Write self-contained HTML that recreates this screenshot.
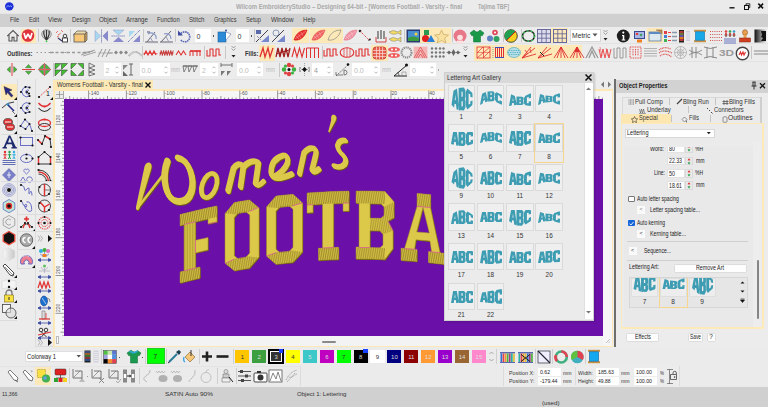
<!DOCTYPE html><html><head><meta charset="utf-8"><style>
*{margin:0;padding:0;box-sizing:border-box}
html,body{width:768px;height:407px;overflow:hidden;background:#ececec;font-family:"Liberation Sans",sans-serif;color:#222;position:relative}
.a{position:absolute}
.t{position:absolute;white-space:nowrap;line-height:1}
svg{position:absolute;overflow:visible}
</style></head><body><div class="a" style="left:0px;top:0px;width:768px;height:407px;background:#ececec"></div><div class="a" style="left:0px;top:0px;width:768px;height:13px;background:#ebebeb"></div><svg style="left:0px;top:0px;" width="20" height="13" viewBox="0 0 20 13"><ellipse cx="9.3" cy="6.3" rx="4.3" ry="4.1" fill="#1c2ed8"/><path d="M6.3 7.2 Q8 4.5 9.5 6.5 Q10.5 5 12 6.8" stroke="#a8c8ff" stroke-width="0.8" fill="none"/></svg><div class="t" style="left:235.50px;top:4.01px;font-size:6.6px;color:#a9a9a9;font-weight:bold;transform:scaleX(0.902);transform-origin:0 0;">Wilcom EmbroideryStudio – Designing 64-bit - [Womens Football - Varsity - final</div><div class="t" style="left:477.80px;top:4.01px;font-size:6.6px;color:#a9a9a9;font-weight:bold;transform:scaleX(0.832);transform-origin:0 0;">Tajima TBF]</div><svg style="left:725px;top:0px;" width="43" height="13" viewBox="0 0 43 13"><path d="M4.5 7.8h5" stroke="#111" stroke-width="1.4"/><rect x="19.5" y="5.5" width="4" height="4" fill="none" stroke="#111" stroke-width="1"/><path d="M21 5V3.8h3.8v3.8H23.5" fill="none" stroke="#111" stroke-width="0.9"/><path d="M33.3 3.6l4.8 4.8M38.1 3.6l-4.8 4.8" stroke="#111" stroke-width="1.5"/></svg><div class="a" style="left:0px;top:13px;width:768px;height:1px;background:#e6e6e6"></div><div class="a" style="left:0px;top:13.5px;width:768px;height:13px;background:#d0d0d0"></div><div class="t" style="left:9.90px;top:16.69px;font-size:7.1px;color:#3a3a3a;transform:scaleX(0.804);transform-origin:0 0;">File</div><div class="t" style="left:29.00px;top:16.69px;font-size:7.1px;color:#3a3a3a;transform:scaleX(0.817);transform-origin:0 0;">Edit</div><div class="t" style="left:48.00px;top:16.69px;font-size:7.1px;color:#3a3a3a;transform:scaleX(0.917);transform-origin:0 0;">View</div><div class="t" style="left:71.50px;top:16.69px;font-size:7.1px;color:#3a3a3a;transform:scaleX(0.837);transform-origin:0 0;">Design</div><div class="t" style="left:99.00px;top:16.69px;font-size:7.1px;color:#3a3a3a;transform:scaleX(0.877);transform-origin:0 0;">Object</div><div class="t" style="left:126.00px;top:16.69px;font-size:7.1px;color:#3a3a3a;transform:scaleX(0.871);transform-origin:0 0;">Arrange</div><div class="t" style="left:157.00px;top:16.69px;font-size:7.1px;color:#3a3a3a;transform:scaleX(0.834);transform-origin:0 0;">Function</div><div class="t" style="left:188.60px;top:16.69px;font-size:7.1px;color:#3a3a3a;transform:scaleX(0.867);transform-origin:0 0;">Stitch</div><div class="t" style="left:213.50px;top:16.69px;font-size:7.1px;color:#3a3a3a;transform:scaleX(0.792);transform-origin:0 0;">Graphics</div><div class="t" style="left:246.00px;top:16.69px;font-size:7.1px;color:#3a3a3a;transform:scaleX(0.808);transform-origin:0 0;">Setup</div><div class="t" style="left:270.50px;top:16.69px;font-size:7.1px;color:#3a3a3a;transform:scaleX(0.891);transform-origin:0 0;">Window</div><div class="t" style="left:302.50px;top:16.69px;font-size:7.1px;color:#3a3a3a;transform:scaleX(0.856);transform-origin:0 0;">Help</div><div class="a" style="left:0px;top:26.5px;width:768px;height:52.5px;background:#ececec"></div><div class="a" style="left:0px;top:43px;width:768px;height:1px;background:#e2e2e2"></div><div class="a" style="left:0px;top:60.5px;width:768px;height:1px;background:#e2e2e2"></div><div class="a" style="left:0px;top:78.5px;width:440px;height:1px;background:#e2e2e2"></div><div class="a" style="left:1px;top:29px;width:3px;height:14px;background-image:radial-gradient(#b8b8b8 0.6px,transparent 0.7px);background-size:2px 2px"></div><svg style="left:6px;top:29px;" width="14" height="14" viewBox="0 0 14 14"><path d="M1.2 7.2L7 1.6l5.8 5.6M3 5.8v6.2h3v-3.6h2v3.6h3V5.8" fill="none" stroke="#555" stroke-width="1.1"/></svg><div class="a" style="left:20.5px;top:28.5px;width:15.5px;height:14px;background:#fde9b8"></div><svg style="left:21px;top:29px;" width="14" height="13" viewBox="0 0 14 13"><circle cx="7" cy="6.5" r="6.3" fill="#e0323c"/><path d="M3 4l1.6 5.2 2.4-4 2.4 4L11 4" fill="none" stroke="#fff" stroke-width="1.7" stroke-linejoin="round"/></svg><div class="a" style="left:38px;top:29px;width:1px;height:13px;background:#c8c8c8"></div><svg style="left:41px;top:29px;" width="11" height="13" viewBox="0 0 11 13"><path d="M5.5 0.8C1.5 0.8 0.5 4 0.8 6 1.3 8 3.5 10 5.5 11 7.5 10 9.7 8 10.2 6 10.5 4 9.5 0.8 5.5 0.8z" fill="#ddd" stroke="#555" stroke-width="0.6"/><path d="M5.5 1v10M3 1.8Q2 6 5.5 11M8 1.8Q9 6 5.5 11" stroke="#333" stroke-width="1.2" fill="none"/><circle cx="5.5" cy="12.3" r="0.9" fill="#3c3"/></svg><svg style="left:55px;top:29px;" width="14" height="14" viewBox="0 0 14 14"><path d="M1 4l2-2M3 6l3-2M2 8l2-1M6 1l2 2" stroke="#e04030" stroke-width="1" stroke-dasharray="1 0.6"/><path d="M3 9l4 3" stroke="#336" stroke-width="1.2"/><circle cx="10" cy="7" r="1.8" fill="none" stroke="#444" stroke-width="1"/><rect x="7.5" y="9" width="5" height="4" fill="#fff" stroke="#444" stroke-width="1"/></svg><div class="a" style="left:70px;top:29px;width:1px;height:13px;background:#c8c8c8"></div><svg style="left:72px;top:28.5px;" width="16" height="14" viewBox="0 0 16 14"><path d="M2 5l3-3h9v2l-3 3H2z" fill="#f0d9a8" stroke="#555" stroke-width="0.7"/><rect x="2" y="5" width="11" height="8" fill="#f8c878" stroke="#555" stroke-width="0.8"/><path d="M13 5l2-2v8l-2 2z" fill="#d8a858" stroke="#555" stroke-width="0.7"/></svg><div class="a" style="left:89px;top:29px;width:3px;height:14px;background-image:radial-gradient(#b8b8b8 0.6px,transparent 0.7px);background-size:2px 2px"></div><svg style="left:94px;top:28.5px;" width="15" height="14" viewBox="0 0 15 14"><path d="M7.5 0.5v13" stroke="#5566aa" stroke-width="0.9" stroke-dasharray="1.2 0.8"/><path d="M1 1.5L6.5 7 1 12.5z" fill="#a8d8f0" stroke="#88b" stroke-width="0.4"/><path d="M14 1.5L8.5 7 14 12.5z" fill="#8888cc"/></svg><svg style="left:111px;top:28.5px;" width="15" height="14" viewBox="0 0 15 14"><path d="M0.5 7h14" stroke="#5566aa" stroke-width="0.9" stroke-dasharray="1.2 0.8"/><path d="M2 1h11L7.5 6z" fill="#a8d8f0" stroke="#88b" stroke-width="0.4"/><path d="M2 13h11L7.5 8z" fill="#8888cc"/></svg><svg style="left:127px;top:28.5px;" width="15" height="14" viewBox="0 0 15 14"><path d="M1 13L13 1" stroke="#5566aa" stroke-width="0.9" stroke-dasharray="1.2 0.8"/><path d="M2 2h6L2 8z" fill="#a8d8f0"/><path d="M13 6v7H6z" fill="#8888cc"/></svg><div class="a" style="left:142.5px;top:29px;width:1px;height:13px;background:#c8c8c8"></div><svg style="left:144px;top:28.5px;" width="15" height="14" viewBox="0 0 15 14"><path d="M1 13h13M3 13L11 3" stroke="#667" stroke-width="1"/><path d="M4 5a5 5 0 0 1 8 5" fill="none" stroke="#8899cc" stroke-width="1.2"/><path d="M6 8l3 5" stroke="#99b" stroke-width="1"/><path d="M3 3l3 0" stroke="#557" stroke-width="1"/></svg><svg style="left:159px;top:28.5px;" width="15" height="14" viewBox="0 0 15 14"><path d="M1 13h13M2 13L12 2" stroke="#667" stroke-width="1"/><path d="M5 5a5 5 0 0 1 7 5" fill="none" stroke="#8899cc" stroke-width="1.2"/><path d="M7 8l3 5" stroke="#99b" stroke-width="1"/></svg><div class="a" style="left:174.5px;top:29px;width:1px;height:13px;background:#c8c8c8"></div><svg style="left:177px;top:28.5px;" width="15" height="14" viewBox="0 0 15 14"><path d="M4 4.5a5 5 0 1 1 -0.5 6" fill="none" stroke="#5a6ab8" stroke-width="1.6" stroke-dasharray="1.6 0.6"/><path d="M1 1.5v5h5z" fill="#3a4aa0"/></svg><div class="a" style="left:194.5px;top:28.5px;width:16px;height:13.5px;background:#fff"></div><div class="t" style="left:196.50px;top:33.07px;font-size:7px;color:#333;">0</div><div class="a" style="left:212.5px;top:35px;width:1.5px;height:1.5px;background:#555"></div><svg style="left:217px;top:28.5px;" width="16" height="14" viewBox="0 0 16 14"><rect x="1" y="3" width="8" height="10" fill="#2a8ad8" stroke="#2060a0" stroke-width="0.6"/><path d="M9 3l5 2-5 6" fill="#fff" stroke="#6a7ab0" stroke-width="0.6"/><circle cx="9" cy="1.5" r="1" fill="#3050a0"/></svg><div class="a" style="left:235.5px;top:28.5px;width:13px;height:13.5px;background:#fff"></div><div class="t" style="left:237.50px;top:33.07px;font-size:7px;color:#333;">0</div><div class="a" style="left:250.5px;top:35px;width:1.5px;height:1.5px;background:#555"></div><div class="a" style="left:253.5px;top:29px;width:1px;height:13px;background:#c8c8c8"></div><svg style="left:255px;top:28.5px;" width="15" height="14" viewBox="0 0 15 14"><rect x="1" y="1" width="5" height="4" fill="#5a6aa8"/><path d="M1 13L13 1" stroke="#445" stroke-width="1"/><path d="M6 13h8L14 6z" fill="#7788cc"/><path d="M2 7l4 4" stroke="#99a" stroke-width="1"/></svg><svg style="left:271px;top:28.5px;" width="15" height="14" viewBox="0 0 15 14"><circle cx="5" cy="4" r="3" fill="none" stroke="#8899bb" stroke-width="1"/><path d="M1 13L13 1" stroke="#445" stroke-width="1"/><path d="M6 13h8L14 6z" fill="#7788cc"/></svg><div class="a" style="left:289px;top:29px;width:3px;height:14px;background-image:radial-gradient(#b8b8b8 0.6px,transparent 0.7px);background-size:2px 2px"></div><div class="a" style="left:292px;top:28px;width:17px;height:15px;background:#fde9b8"></div><svg style="left:293px;top:29px;" width="15" height="13" viewBox="0 0 15 13"><path d="M1 11C3 4 8 1 14 1 12 8 7 12 1 11z" fill="#e83030" stroke="#c00" stroke-width="0.5"/><path d="M2 10L13 2M3 7l3 3M5 5l3 4M8 3l2 4" stroke="#fff" stroke-width="0.5" opacity=".6"/></svg><div class="a" style="left:310px;top:28px;width:32.5px;height:15px;background:#fde9b8"></div><svg style="left:311px;top:29px;" width="15" height="13" viewBox="0 0 15 13"><path d="M1 11C3 4 8 1 14 1 12 8 7 12 1 11z" fill="#f06060" stroke="#e05050" stroke-width="0.5"/><path d="M2 10L13 2M3 7l3 3M5 5l3 4M8 3l2 4" stroke="#fff" stroke-width="0.5" opacity=".6"/></svg><svg style="left:327px;top:29px;" width="15" height="13" viewBox="0 0 15 13"><path d="M1 11C3 4 8 1 14 1 12 8 7 12 1 11z" fill="none" stroke="#888" stroke-width="0.7"/></svg><svg style="left:343px;top:29px;" width="14" height="13" viewBox="0 0 14 13"><path d="M1 11C3 4 8 1 14 1 12 8 7 12 1 11z" fill="#f090a0" stroke="#e07080" stroke-width="0.5"/><path d="M2 10L13 2M3 7l3 3M5 5l3 4M8 3l2 4" stroke="#fff" stroke-width="0.5" opacity=".6"/></svg><svg style="left:358px;top:29px;" width="14" height="13" viewBox="0 0 14 13"><circle cx="2" cy="2" r="1.3" fill="#222"/><path d="M2.5 2.5L11 11" stroke="#d03030" stroke-width="0.9" stroke-dasharray="1.3 0.9"/><path d="M10 12l3-1-1-2z" fill="#222"/></svg><svg style="left:374px;top:28.5px;" width="14" height="14" viewBox="0 0 14 14"><path d="M4 2v8M7 1v9M10 2v8" stroke="#555" stroke-width="1.2"/><path d="M2 8v5h10V8" fill="none" stroke="#d03030" stroke-width="0.9"/></svg><svg style="left:388px;top:29px;" width="15" height="14" viewBox="0 0 15 14"><g><path d="M1 3Q5 0 10 3L13 1v5l-3-2Q5 7 1 3z" fill="#f4dc60" stroke="#777" stroke-width="0.5"/></g><g transform="translate(0,7)"><path d="M1 3Q5 0 10 3L13 1v5l-3-2Q5 7 1 3z" fill="#f4dc60" stroke="#777" stroke-width="0.5"/></g></svg><div class="a" style="left:404px;top:29px;width:1px;height:13px;background:#c8c8c8"></div><svg style="left:406px;top:28.5px;" width="15" height="14" viewBox="0 0 15 14"><rect x="0.5" y="0.5" width="14" height="13" fill="#2a3a70"/><rect x="2" y="2" width="11" height="10" fill="#4a90d0"/><path d="M2 9q4-3 11 0v3H2z" fill="#3a9a40"/><circle cx="10" cy="5" r="1.5" fill="#f0d040"/></svg><div class="a" style="left:420px;top:28px;width:31px;height:15px;background:#fde9b8"></div><svg style="left:421px;top:28.5px;" width="14" height="14" viewBox="0 0 14 14"><rect x="3" y="1" width="5" height="5" fill="#2a9a50"/><circle cx="4.5" cy="9.5" r="3.5" fill="#e02020"/><path d="M6 13l4-7 4 7z" fill="#2a80d8"/></svg><svg style="left:434px;top:28.5px;" width="15" height="14" viewBox="0 0 15 14"><path d="M7.5 1l2 4.5 5 .5-3.8 3.2 1.2 4.8-4.4-2.5-4.4 2.5 1.2-4.8L0.5 6l5-.5z" fill="#f8e0a0" stroke="#c8a860" stroke-width="0.7"/></svg><div class="a" style="left:451.5px;top:29px;width:1px;height:13px;background:#c8c8c8"></div><svg style="left:453px;top:28.5px;" width="15" height="14" viewBox="0 0 15 14"><circle cx="7" cy="7" r="6.5" fill="#e87888"/><circle cx="7" cy="8.5" r="2.8" fill="#fde0e0"/><path d="M4 13h6" stroke="#fde0e0" stroke-width="3"/></svg><svg style="left:469px;top:28.5px;" width="16" height="14" viewBox="0 0 16 14"><path d="M5 1L1 4l2 3 1.5-1V13h7V6l1.5 1 2-3-4-3q-1.5 2-3 2t-3-2z" fill="#1a9a48" stroke="#0a6a30" stroke-width="0.5"/></svg><svg style="left:486px;top:28.5px;" width="15" height="14" viewBox="0 0 15 14"><circle cx="9" cy="3.5" r="2.8" fill="#e04858"/><circle cx="4" cy="9.5" r="3" fill="#6080c0"/><circle cx="10.5" cy="10" r="3" fill="#30a060"/><circle cx="9" cy="3.5" r="1" fill="#fff"/></svg><div class="a" style="left:502.5px;top:29px;width:1px;height:13px;background:#c8c8c8"></div><svg style="left:504px;top:28.5px;" width="15" height="14" viewBox="0 0 15 14"><circle cx="7" cy="7" r="6.3" fill="#f4d020" stroke="#222" stroke-width="0.8"/><path d="M2.5 11.5A6.3 6.3 0 0 1 11.5 2.5z" fill="#20a050"/><path d="M2 12L12 2" stroke="#d02020" stroke-width="1"/></svg><div class="a" style="left:520.5px;top:29px;width:1px;height:13px;background:#c8c8c8"></div><svg style="left:521px;top:28.5px;" width="15" height="14" viewBox="0 0 15 14"><ellipse cx="7.5" cy="7" rx="6" ry="5.3" fill="none" stroke="#222" stroke-width="1.6"/><ellipse cx="7.5" cy="7" rx="6" ry="5.3" fill="none" stroke="#40c060" stroke-width="1.4" stroke-dasharray="2 2"/></svg><svg style="left:536.5px;top:28.5px;" width="14" height="14" viewBox="0 0 14 14"><rect x="0.5" y="0.5" width="13" height="13" fill="#dde" stroke="#6a6a9a" stroke-width="1"/><path d="M4.8 0.5v13M9.2 0.5v13M0.5 4.8h13M0.5 9.2h13" stroke="#6a6a9a" stroke-width="0.9"/></svg><div class="a" style="left:551px;top:28px;width:17px;height:15px;background:#fde9b8"></div><svg style="left:552.5px;top:28.5px;" width="14" height="14" viewBox="0 0 14 14"><rect x="0.5" y="0.5" width="13" height="13" fill="#fde9b8" stroke="#6a6a9a" stroke-width="1"/><path d="M4.8 0.5v13M9.2 0.5v13M0.5 4.8h13M0.5 9.2h13" stroke="#6a6a9a" stroke-width="0.9"/></svg><div class="a" style="left:569.5px;top:28.5px;width:31px;height:13.5px;background:#fff;border:1px solid #d8d8d8"></div><div class="t" style="left:572.00px;top:32.54px;font-size:6.8px;color:#333;transform:scaleX(0.999);transform-origin:0 0;">Metric</div><svg style="left:592px;top:33px;" width="6" height="4" viewBox="0 0 6 4"><path d="M0.5 0.5h5l-2.5 3z" fill="#555"/></svg><svg style="left:601.5px;top:29px;" width="8" height="13" viewBox="0 0 8 13"><path d="M1.5 1l2 2 2-2M1.5 3.5l2 2 2-2" stroke="#888" stroke-width="0.8" fill="none"/><path d="M1.5 9h4l-2 2.5z" fill="#222"/></svg><div class="a" style="left:611px;top:29px;width:3px;height:14px;background-image:radial-gradient(#b8b8b8 0.6px,transparent 0.7px);background-size:2px 2px"></div><svg style="left:615.5px;top:28.5px;" width="15" height="15" viewBox="0 0 15 15"><circle cx="7.3" cy="7" r="6.5" fill="#1e1e1e"/><circle cx="7.3" cy="3.6" r="1.1" fill="#fff"/><path d="M6 6h2.3v4.5h1V11.5H5.7v-1h1V7H6z" fill="#fff"/></svg><svg style="left:632px;top:28.5px;" width="15" height="15" viewBox="0 0 15 15"><rect x="2" y="2" width="11" height="8" fill="#3a4a90"/><rect x="3" y="3" width="9" height="6" fill="#a8b8e8"/><circle cx="5" cy="5" r="1.3" fill="#e04040"/><circle cx="9" cy="6" r="1.3" fill="#40a060"/><rect x="5" y="10.5" width="5" height="3" fill="#f08020"/></svg><div class="a" style="left:647px;top:28px;width:16px;height:15px;background:#fde9b8"></div><svg style="left:648px;top:28.5px;" width="15" height="14" viewBox="0 0 15 14"><rect x="1" y="3" width="12" height="9" fill="#dde8f0" stroke="#5a7aa0" stroke-width="0.8"/><rect x="1" y="3" width="12" height="2" fill="#5a8ac0"/><path d="M8 1h6v4" fill="#c09060" stroke="#806040" stroke-width="0.6"/></svg><svg style="left:663px;top:28.5px;" width="15" height="14" viewBox="0 0 15 14"><rect x="1" y="2" width="3" height="3" fill="#e04040"/><rect x="1" y="6" width="3" height="3" fill="#4080d0"/><rect x="1" y="10" width="3" height="3" fill="#40b050"/><path d="M5 3.5h3M5 7.5h3M5 11.5h3" stroke="#e04040" stroke-width="1"/><path d="M9 3.5h5M9 7.5h5M9 11.5h5" stroke="#8899aa" stroke-width="1.3"/></svg><svg style="left:678px;top:28.5px;" width="14" height="14" viewBox="0 0 14 14"><rect x="1" y="1" width="5" height="12.5" fill="#222"/><path d="M1.5 3h4M1.5 5h4M1.5 7h4M1.5 9h4M1.5 11h4" stroke-width="1.3" stroke="#e04040"/><path d="M1.5 5h4" stroke="#40a040" stroke-width="1.3"/><path d="M1.5 7h4" stroke="#4060e0" stroke-width="1.3"/><path d="M1.5 9h4" stroke="#f0a020" stroke-width="1.3"/><rect x="8" y="2" width="4" height="10" fill="#ccd"/><path d="M8 4h4M8 6h4M8 8h4M8 10h4" stroke="#fff" stroke-width="0.6"/></svg><svg style="left:693px;top:28.5px;" width="14" height="14" viewBox="0 0 14 14"><rect x="1" y="0.8" width="12" height="2" fill="#c89040"/><rect x="1" y="11.2" width="12" height="2" fill="#c89040"/><rect x="2.5" y="2.8" width="9" height="8.4" fill="#18a8e8" stroke="#0a70b0" stroke-width="0.6"/></svg><svg style="left:709px;top:28.5px;" width="14" height="14" viewBox="0 0 14 14"><path d="M1 2.5h12M1 5.5h12M1 8.5h12M1 11.5h12" stroke="#d05050" stroke-width="1" stroke-dasharray="1 1.2"/></svg><svg style="left:723px;top:28.5px;" width="14" height="15" viewBox="0 0 14 15"><circle cx="3" cy="2.5" r="1.3" fill="#e04040"/><circle cx="7" cy="2.5" r="1.3" fill="#30a050"/><circle cx="11" cy="2.5" r="1.3" fill="#30a0d0"/><path d="M3 4v4M1.5 6h3M7 4v4M5.5 6h3M11 4v4M9.5 6h3" stroke-width="1.2" stroke="#555"/><path d="M3 4v3M7 4v3M11 4v3" stroke="#e04040" stroke-width="1.3"/><path d="M1 10h12M1 12h12M1 14h12" stroke="#5a6ab8" stroke-width="0.9"/></svg><svg style="left:738px;top:28.5px;" width="14" height="14" viewBox="0 0 14 14"><ellipse cx="7" cy="3.5" rx="2.5" ry="2.8" fill="#e8a050" stroke="#905020" stroke-width="0.6"/><path d="M5.5 6h3v3h-3z" fill="#e8a050"/><rect x="1.5" y="9" width="11" height="4" fill="#d04020" stroke="#802010" stroke-width="0.5"/></svg><svg style="left:754px;top:28.5px;" width="14" height="14" viewBox="0 0 14 14"><defs><linearGradient id="gbw"><stop offset="0" stop-color="#111"/><stop offset="1" stop-color="#fff"/></linearGradient></defs><rect x="0.5" y="0.5" width="13" height="13" fill="url(#gbw)"/><path d="M7 2h5v10H7l2-3-2-1 1-2z" fill="#111"/></svg><div class="a" style="left:1px;top:46px;width:3px;height:13px;background-image:radial-gradient(#b8b8b8 0.6px,transparent 0.7px);background-size:2px 2px"></div><div class="t" style="left:7.00px;top:50.54px;font-size:6.8px;color:#333;font-weight:bold;transform:scaleX(0.865);transform-origin:0 0;">Outlines:</div><svg style="left:36px;top:46px;" width="44" height="13" viewBox="0 0 44 13"><path d="M0.5 6.5h40" stroke="#999" stroke-width="1" stroke-dasharray="1.5 2.5"/></svg><svg style="left:36px;top:46px;" width="44" height="13" viewBox="0 0 44 13"><path d="M14 6.5h40" stroke="#999" stroke-width="1.3" stroke-dasharray="3 2.5"/></svg><svg style="left:80px;top:46px;" width="17" height="13" viewBox="0 0 17 13"><path d="M1 9L15 4M3 10L16 6M2 7L13 5" stroke="#999" stroke-width="0.9"/></svg><svg style="left:97px;top:46px;" width="17" height="13" viewBox="0 0 17 13"><path d="M1 11L5 3M5 11L9 3M9 11L13 3M11 7h5" stroke="#999" stroke-width="1"/><path d="M1 7h14" stroke="#999" stroke-width="0.6"/></svg><svg style="left:113px;top:46px;" width="16" height="13" viewBox="0 0 16 13"><path d="M1 6.5l2-2 2 2-2 2zM6 6.5l2-2 2 2-2 2zM11 6.5l2-2 2 2-2 2z" fill="#888"/></svg><svg style="left:128px;top:46px;" width="15" height="13" viewBox="0 0 15 13"><path d="M1 10Q7 2 14 10" stroke="#999" stroke-width="2" fill="none" stroke-dasharray="0.6 0.6"/></svg><div class="a" style="left:141.5px;top:46px;width:1px;height:13px;background:#c8c8c8"></div><svg style="left:143px;top:46px;" width="16" height="13" viewBox="0 0 16 13"><path d="M1 9l2-4 2 4 2-4 2 4 2-4 2 4" stroke="#e03030" stroke-width="1.2" fill="none"/><path d="M0.5 7.5h14" stroke="#e03030" stroke-width="0.6"/></svg><svg style="left:159px;top:46px;" width="16" height="13" viewBox="0 0 16 13"><path d="M1 9.5l1.2-5 1.2 5 1.2-5 1.2 5 1.2-5 1.2 5 1.2-5 1.2 5 1.2-5 1.2 5 1.2-5" stroke="#c02020" stroke-width="0.8" fill="none"/><path d="M0.5 7h14" stroke="#c02020" stroke-width="0.8"/></svg><svg style="left:175px;top:46px;" width="14" height="13" viewBox="0 0 14 13"><path d="M1 9l2.5-4 2.5 4 2.5-4 2.5 4" stroke="#e03030" stroke-width="1.1" fill="none"/></svg><svg style="left:189px;top:46px;" width="13" height="13" viewBox="0 0 13 13"><path d="M1 10V5h3v5M5 5h3v5M8 5h3v5" stroke="#e03030" stroke-width="1" fill="none"/><path d="M1 5h11" stroke="#e03030" stroke-width="1.4"/></svg><div class="a" style="left:203.5px;top:46px;width:1px;height:13px;background:#c8c8c8"></div><svg style="left:206px;top:46px;" width="16" height="13" viewBox="0 0 16 13"><path d="M1 4v6h3V3h3v7h3V3h3v6h2" stroke="#e03030" stroke-width="1.1" fill="none" stroke-linejoin="round"/></svg><div class="a" style="left:224.5px;top:46px;width:1px;height:13px;background:#c8c8c8"></div><svg style="left:230px;top:45px;" width="8" height="15" viewBox="0 0 8 15"><path d="M1.5 1l2 2 2-2M1.5 3.5l2 2 2-2" stroke="#888" stroke-width="0.8" fill="none"/><path d="M1.5 10h4l-2 2.5z" fill="#222"/></svg><div class="a" style="left:240px;top:46px;width:3px;height:13px;background-image:radial-gradient(#b8b8b8 0.6px,transparent 0.7px);background-size:2px 2px"></div><div class="t" style="left:244.50px;top:50.54px;font-size:6.8px;color:#333;font-weight:bold;transform:scaleX(0.851);transform-origin:0 0;">Fills:</div><div class="a" style="left:259px;top:44.5px;width:16px;height:16px;background:#fde9b8"></div><svg style="left:259px;top:46px;" width="16" height="13" viewBox="0 0 16 13"><path d="M1 11L4 2l2 9 3-9 2 9 3-9" stroke="#e03030" stroke-width="1.3" fill="none"/></svg><svg style="left:275px;top:46px;" width="16" height="13" viewBox="0 0 16 13"><path d="M1 11L3 2l2 9 2-9 2 9 2-9 2 9 2-9" stroke="#a02020" stroke-width="1.3" fill="none"/><path d="M1 8L14 4" stroke="#a02020" stroke-width="1"/></svg><svg style="left:291px;top:46px;" width="15" height="13" viewBox="0 0 15 13"><path d="M1 11L3.5 2l2.5 9 2.5-9 2.5 9 2.5-9" stroke="#e03030" stroke-width="1.1" fill="none"/></svg><svg style="left:305px;top:46px;" width="16" height="13" viewBox="0 0 16 13"><path d="M1.5 12V2h12v10M5.5 2v10M9.5 2v10" stroke="#e03030" stroke-width="1" fill="none"/></svg><div class="a" style="left:322px;top:46px;width:1px;height:13px;background:#c8c8c8"></div><svg style="left:323px;top:46px;" width="16" height="13" viewBox="0 0 16 13"><path d="M1 4v6h3V3h3v7h3V3h3v6h2" stroke="#e03030" stroke-width="1.1" fill="none"/></svg><svg style="left:339px;top:46px;" width="16" height="13" viewBox="0 0 16 13"><ellipse cx="8" cy="6.5" rx="6.8" ry="4.8" fill="none" stroke="#e03030" stroke-width="1.1"/><path d="M5 2.5v8M8 2v9M11 2.5v8" stroke="#e03030" stroke-width="0.7"/></svg><svg style="left:355px;top:46px;" width="16" height="13" viewBox="0 0 16 13"><path d="M1 4v6h3V3h3v7h3V3h3v6h2" stroke="#e03030" stroke-width="1.1" fill="none"/></svg><div class="a" style="left:371px;top:44.5px;width:17px;height:16px;background:#fde9b8"></div><svg style="left:372px;top:46px;" width="15" height="14" viewBox="0 0 15 14"><rect x="1" y="1" width="13" height="12" rx="3" fill="#e86050" stroke="#c03020" stroke-width="0.7"/><path d="M4.5 1v12M7.5 1v12M10.5 1v12M1 4.5h13M1 7.5h13M1 10.5h13" stroke="#fff" stroke-width="0.7" opacity=".8"/></svg><svg style="left:387px;top:46px;" width="14" height="13" viewBox="0 0 14 13"><ellipse cx="7" cy="3.5" rx="6" ry="2.6" fill="#f06060"/><ellipse cx="7" cy="9.5" rx="6" ry="2.6" fill="#f06060"/><circle cx="5" cy="3.5" r="1" fill="#fff"/><circle cx="9" cy="3.5" r="1" fill="#fff"/><circle cx="5" cy="9.5" r="1" fill="#fff"/><circle cx="9" cy="9.5" r="1" fill="#fff"/></svg><svg style="left:400px;top:46px;" width="13" height="13" viewBox="0 0 13 13"><circle cx="6.5" cy="6.5" r="5" fill="none" stroke="#888" stroke-width="2" stroke-dasharray="1.2 0.8"/></svg><svg style="left:413px;top:46px;" width="15" height="13" viewBox="0 0 15 13"><rect x="0.5" y="0.5" width="14" height="12" fill="#f5c0c0"/><path d="M1 12L7.5 1 14 12M3 12l4.5-8 4.5 8M5 12l2.5-4 2.5 4" stroke="#e06060" stroke-width="1" fill="none"/><path d="M2 1v11M4 1v11M6 1v11M9 1v11M11 1v11M13 1v11" stroke="#e88" stroke-width="0.4"/></svg><svg style="left:430px;top:46px;" width="15" height="13" viewBox="0 0 15 13"><g fill="#777"><circle cx="2" cy="2.5" r="1.2"/><circle cx="6" cy="2.5" r="1.2"/><circle cx="10" cy="2.5" r="1.2"/><circle cx="13.5" cy="2.5" r="1.2"/><circle cx="2" cy="6.5" r="1.2"/><circle cx="6" cy="6.5" r="1.2"/><circle cx="10" cy="6.5" r="1.2"/><circle cx="13.5" cy="6.5" r="1.2"/><circle cx="2" cy="10.5" r="1.2"/><circle cx="6" cy="10.5" r="1.2"/><circle cx="10" cy="10.5" r="1.2"/><circle cx="13.5" cy="10.5" r="1.2"/></g></svg><svg style="left:446px;top:46px;" width="15" height="13" viewBox="0 0 15 13"><g fill="#666"><path d="M1 6.5l2-2 2 2-2 2z"/><path d="M5.5 6.5l2-3.5 2 3.5-2 3.5z"/><path d="M10 6.5l2-2 2 2-2 2z"/></g><path d="M0.5 6.5h14" stroke="#666" stroke-width="0.6"/></svg><svg style="left:462px;top:45px;" width="8" height="15" viewBox="0 0 8 15"><path d="M1.5 1l2 2 2-2M1.5 3.5l2 2 2-2" stroke="#888" stroke-width="0.8" fill="none"/><path d="M1.5 10h4l-2 2.5z" fill="#222"/></svg><div class="a" style="left:472px;top:46px;width:3px;height:13px;background-image:radial-gradient(#b8b8b8 0.6px,transparent 0.7px);background-size:2px 2px"></div><div class="a" style="left:474px;top:44.5px;width:108px;height:16px;background:#fde9b8"></div><svg style="left:475.5px;top:46px;" width="15" height="13" viewBox="0 0 15 13"><rect x="1" y="1" width="13" height="11" fill="none" stroke="#e03030" stroke-width="0.8"/><path d="M1 12L14 1M1 7L7 1M7 12L14 5M7.5 1v11" stroke="#e03030" stroke-width="0.7"/><path d="M1 6.5h13" stroke="#e03030" stroke-width="0.5"/></svg><svg style="left:491px;top:46px;" width="16" height="13" viewBox="0 0 16 13"><path d="M4.5 1v11M6.5 1v11M8.5 1v11M10.5 1v11M12.5 1v11" stroke="#e03030" stroke-width="1"/><path d="M4 1.5h9M4 11.5h9" stroke="#3a50c0" stroke-width="1.2"/><path d="M2 1v11" stroke="#777" stroke-width="0.7" stroke-dasharray="1 1"/></svg><svg style="left:506px;top:46px;" width="16" height="13" viewBox="0 0 16 13"><ellipse cx="8" cy="6.5" rx="6.5" ry="5" fill="#b8e0e8" stroke="#3aa0b8" stroke-width="0.6"/><path d="M3 4.5h10M2 6.5h12M3 8.5h10" stroke="#3aa0b8" stroke-width="0.8" stroke-dasharray="1 0.8"/></svg><svg style="left:521px;top:46px;" width="16" height="13" viewBox="0 0 16 13"><path d="M1 12L14 2M1 12L10 1M1 12L15 8M1 12l6-5" stroke="#e03030" stroke-width="0.9"/><path d="M4 4l2 3M9 3l1 4" stroke="#e03030" stroke-width="0.8"/></svg><svg style="left:537px;top:46px;" width="16" height="13" viewBox="0 0 16 13"><path d="M1 12L14 2M1 12L10 1M1 12L15 8" stroke="#e03030" stroke-width="0.9"/><path d="M3 6l4 4" stroke="#222" stroke-width="1"/></svg><svg style="left:553px;top:46px;" width="16" height="13" viewBox="0 0 16 13"><path d="M1 12L8 1l7 11M8 1v11M4 12L8 1l4 11" stroke="#e03030" stroke-width="0.9" fill="none"/></svg><svg style="left:569px;top:46px;" width="16" height="13" viewBox="0 0 16 13"><path d="M1 12L8 1l7 11M8 1v11M4 12L8 1l4 11" stroke="#e03030" stroke-width="0.9" fill="none"/><path d="M5 6h6L8 1z" fill="#e03030"/></svg><svg style="left:585px;top:46px;" width="14" height="13" viewBox="0 0 14 13"><path d="M1 12L7 1l6 11M4 12L7 5l3 7" stroke="#999" stroke-width="1.3" fill="none"/></svg><svg style="left:598px;top:46px;" width="15" height="13" viewBox="0 0 15 13"><path d="M1 3l2 9 2-9 2 9 2-9 2 9 2-9" stroke="#e85050" stroke-width="1" fill="none"/><path d="M2 1l2 9M8 2l2 8" stroke="#e85050" stroke-width="0.6"/></svg><svg style="left:613px;top:46px;" width="15" height="13" viewBox="0 0 15 13"><path d="M1 2v10h3V2h3v10h3V2h3v10" stroke="#999" stroke-width="1" fill="none"/></svg><svg style="left:628px;top:46px;" width="15" height="13" viewBox="0 0 15 13"><rect x="2" y="1" width="11" height="11" fill="none" stroke="#e03030" stroke-width="0.9" stroke-dasharray="1 0.7"/><path d="M5 3v7M7.5 3v7M10 3v7" stroke="#e03030" stroke-width="0.9" stroke-dasharray="1 0.7"/></svg><svg style="left:643px;top:46px;" width="15" height="13" viewBox="0 0 15 13"><path d="M1 2.5h13M1 5h13M1 7.5h13M1 10h13" stroke="#aaa" stroke-width="0.9"/></svg><svg style="left:658px;top:46px;" width="15" height="13" viewBox="0 0 15 13"><path d="M1 4Q6 0 13 3M1 7Q6 3 14 7M2 10Q7 6 14 11" stroke="#e05050" stroke-width="1.2" stroke-dasharray="1 0.6" fill="none"/></svg><svg style="left:673px;top:46px;" width="15" height="13" viewBox="0 0 15 13"><circle cx="7.5" cy="6.5" r="6" fill="none" stroke="#aaa" stroke-width="0.8"/><circle cx="7.5" cy="6.5" r="3" fill="none" stroke="#aaa" stroke-width="0.8"/><path d="M7.5 0.5v12M1.5 6.5h12M3 2l9 9M12 2l-9 9" stroke="#aaa" stroke-width="0.6"/></svg><svg style="left:688px;top:46px;" width="15" height="13" viewBox="0 0 15 13"><path d="M4 1v11M8 1v11" stroke="#888" stroke-width="1"/><path d="M1 4q6 5 13 0M1 9q6-5 13 0" stroke="#888" stroke-width="0.9" fill="none"/></svg><svg style="left:703px;top:46px;" width="15" height="13" viewBox="0 0 15 13"><path d="M1 1q6 3 13 0M1 12q6-3 13 0M4 1v11M10 1v11" stroke="#888" stroke-width="1" fill="none"/></svg><div class="t" style="left:719.00px;top:48.88px;font-size:9px;color:#999;font-weight:bold;transform:scaleX(1.304);transform-origin:0 0;">3D</div><svg style="left:735px;top:45.5px;" width="15" height="15" viewBox="0 0 15 15"><circle cx="7.5" cy="7.5" r="6.2" fill="#fff" stroke="#444" stroke-width="1.4"/><path d="M4 9l1.5-3 1 3 1.5-3 1 3 1.5-3" stroke="#e03030" stroke-width="1.1" fill="none"/></svg><div class="a" style="left:751px;top:46px;width:1px;height:13px;background:#c8c8c8"></div><svg style="left:754px;top:46px;" width="14" height="13" viewBox="0 0 14 13"><path d="M0 5h14M0 8h14" stroke="#aaa" stroke-width="1.3"/></svg><div class="a" style="left:1px;top:63px;width:3px;height:14px;background-image:radial-gradient(#b8b8b8 0.6px,transparent 0.7px);background-size:2px 2px"></div><svg style="left:5px;top:62px;" width="14" height="15" viewBox="0 0 14 15"><path d="M7 1v13" stroke="#e04040" stroke-width="1"/><path d="M5.3 4.5L2 7.5 5.3 10.5z" fill="#44c030" stroke="#333" stroke-width="0.4"/><path d="M8.7 4.5L12 7.5 8.7 10.5z" fill="#44c030" stroke="#333" stroke-width="0.4"/></svg><svg style="left:21px;top:62px;" width="15" height="15" viewBox="0 0 15 15"><path d="M1 7.5h13" stroke="#e04040" stroke-width="1"/><path d="M4.5 5.8L7.5 2.5l3 3.3z" fill="#44c030" stroke="#333" stroke-width="0.4"/><path d="M4.5 9.2l3 3.3 3-3.3z" fill="#44c030" stroke="#333" stroke-width="0.4"/></svg><svg style="left:37px;top:62px;" width="15" height="15" viewBox="0 0 15 15"><g fill="#44c030" stroke="#333" stroke-width="0.4"><path d="M6.5 2v4.5H2z"/><path d="M8.5 2v4.5H13z"/><path d="M6.5 13V8.5H2z"/><path d="M8.5 13V8.5H13z"/></g><path d="M7.5 1v13M1 7.5h13" stroke="#e06060" stroke-width="1.1"/></svg><div class="a" style="left:52.5px;top:63px;width:1px;height:14px;background:#c8c8c8"></div><svg style="left:54px;top:62px;" width="15" height="15" viewBox="0 0 15 15"><g fill="#44c030" stroke="#333" stroke-width="0.5"><path d="M1 1.5h6L1 7.5z"/><path d="M7.5 1.5h6l-6 6z"/><path d="M1 8h6l-6 6z"/><path d="M7.5 8h6l-6 6z"/></g></svg><svg style="left:70px;top:62px;" width="15" height="15" viewBox="0 0 15 15"><g fill="#44c030" stroke="#333" stroke-width="0.5"><path d="M1 1.5h5.5L1 7z"/><path d="M8 1.5h5.5V7z"/><path d="M1 8v5.5h5.5z"/><path d="M13.5 8v5.5H8z"/></g></svg><svg style="left:87px;top:62px;" width="10" height="15" viewBox="0 0 10 15"><path d="M2 1v13M2 1l6 3-6 2 6 2-6 2 6 2-6 2" stroke="#666" stroke-width="0.9" fill="none"/></svg><div class="a" style="left:103.5px;top:62.5px;width:17px;height:13.5px;background:#fff"></div><div class="t" style="left:105.50px;top:67.07px;font-size:7px;color:#bbb;">2</div><svg style="left:113.5px;top:63.5px;" width="6" height="11.5" viewBox="0 0 6 11.5"><path d="M1.5 4.25l1.5-1.5 1.5 1.5M1.5 7.75l1.5 1.5 1.5-1.5" stroke="#999" stroke-width="0.7" fill="none"/></svg><svg style="left:122px;top:62px;" width="12" height="15" viewBox="0 0 12 15"><path d="M1 3h5L1 8z" fill="#888"/><path d="M1 14h5L1 9z" fill="#666"/><path d="M7 2h4M9 2v11M7 13h4" stroke="#666" stroke-width="1"/></svg><div class="a" style="left:139.5px;top:62.5px;width:30px;height:13.5px;background:#fff"></div><div class="t" style="left:141.50px;top:67.07px;font-size:7px;color:#bbb;">0.0</div><svg style="left:162.5px;top:63.5px;" width="6" height="11.5" viewBox="0 0 6 11.5"><path d="M1.5 4.25l1.5-1.5 1.5 1.5M1.5 7.75l1.5 1.5 1.5-1.5" stroke="#999" stroke-width="0.7" fill="none"/></svg><div class="t" style="left:171.00px;top:67.00px;font-size:6.5px;color:#bbb;transform:scaleX(0.831);transform-origin:0 0;">mm</div><svg style="left:182px;top:63px;" width="17" height="12" viewBox="0 0 17 12"><path d="M1 3h4L2 9zM6 3h4L7 9zM11 3h4l-3 6z" fill="none" stroke="#666" stroke-width="0.8"/><path d="M1 3h15" stroke="#666" stroke-width="1"/></svg><div class="a" style="left:200px;top:62.5px;width:18px;height:13.5px;background:#fff"></div><div class="t" style="left:202.00px;top:67.07px;font-size:7px;color:#bbb;">2</div><svg style="left:211px;top:63.5px;" width="6" height="11.5" viewBox="0 0 6 11.5"><path d="M1.5 4.25l1.5-1.5 1.5 1.5M1.5 7.75l1.5 1.5 1.5-1.5" stroke="#999" stroke-width="0.7" fill="none"/></svg><svg style="left:220px;top:62px;" width="13" height="15" viewBox="0 0 13 15"><path d="M1 3h11M1 1v4M12 1v4" stroke="#666" stroke-width="0.9"/><path d="M1 9h4L1 14zM7 9h4l-4 5z" fill="#777"/></svg><div class="a" style="left:237px;top:62.5px;width:26px;height:13.5px;background:#fff"></div><div class="t" style="left:239.00px;top:67.07px;font-size:7px;color:#bbb;">0.0</div><svg style="left:256px;top:63.5px;" width="6" height="11.5" viewBox="0 0 6 11.5"><path d="M1.5 4.25l1.5-1.5 1.5 1.5M1.5 7.75l1.5 1.5 1.5-1.5" stroke="#999" stroke-width="0.7" fill="none"/></svg><div class="t" style="left:266.00px;top:67.00px;font-size:6.5px;color:#bbb;transform:scaleX(0.831);transform-origin:0 0;">mm</div><div class="a" style="left:279px;top:63px;width:1px;height:14px;background:#c8c8c8"></div><svg style="left:281px;top:62px;" width="16" height="15" viewBox="0 0 16 15"><circle cx="8" cy="3" r="2.2" fill="#e04040"/><circle cx="13" cy="7.5" r="2.2" fill="#3cb040"/><circle cx="8" cy="12" r="2.2" fill="#e04040"/><circle cx="3" cy="7.5" r="2.2" fill="#3cb040"/><circle cx="4.5" cy="4" r="1.6" fill="#3cb040"/><circle cx="11.5" cy="11" r="1.6" fill="#3cb040"/><circle cx="11.5" cy="4" r="1.6" fill="#e04040"/><circle cx="4.5" cy="11" r="1.6" fill="#e04040"/><circle cx="8" cy="7.5" r="1.5" fill="#111"/></svg><svg style="left:298px;top:62px;" width="13" height="15" viewBox="0 0 13 15"><path d="M6.5 1v13M1 7.5h11" stroke="#888" stroke-width="0.7" stroke-dasharray="1 1"/><path d="M6.5 5l2.5 2.5-2.5 2.5-2.5-2.5z" fill="#111"/><path d="M1 6h2M1 9h2M10 6h2M10 9h2" stroke="#555" stroke-width="0.8"/></svg><div class="a" style="left:312px;top:62.5px;width:21px;height:13.5px;background:#fff"></div><div class="t" style="left:314.00px;top:67.07px;font-size:7px;color:#999;">4</div><svg style="left:326px;top:63.5px;" width="6" height="11.5" viewBox="0 0 6 11.5"><path d="M1.5 4.25l1.5-1.5 1.5 1.5M1.5 7.75l1.5 1.5 1.5-1.5" stroke="#999" stroke-width="0.7" fill="none"/></svg><svg style="left:335px;top:62px;" width="16" height="15" viewBox="0 0 16 15"><path d="M1 14L14 2" stroke="#444" stroke-width="0.8" stroke-dasharray="1.5 1"/><circle cx="13" cy="2.5" r="1.3" fill="#111"/><path d="M1 13h7M1 13v-3" stroke="#666" stroke-width="0.8"/><path d="M9 8v5q3 0 3-2.5t-3-2.5" fill="none" stroke="#666" stroke-width="0.8"/></svg><div class="a" style="left:352px;top:62.5px;width:28px;height:13.5px;background:#fff"></div><div class="t" style="left:354.00px;top:67.07px;font-size:7px;color:#bbb;">0.0</div><svg style="left:373px;top:63.5px;" width="6" height="11.5" viewBox="0 0 6 11.5"><path d="M1.5 4.25l1.5-1.5 1.5 1.5M1.5 7.75l1.5 1.5 1.5-1.5" stroke="#999" stroke-width="0.7" fill="none"/></svg><div class="t" style="left:382.00px;top:67.00px;font-size:6.5px;color:#bbb;transform:scaleX(0.831);transform-origin:0 0;">mm</div><svg style="left:393px;top:62px;" width="16" height="15" viewBox="0 0 16 15"><path d="M1 14h13M1 14L14 3" stroke="#222" stroke-width="1"/><circle cx="13.5" cy="3" r="1.5" fill="#111"/><path d="M6 14a6 6 0 0 0-1.5-4" stroke="#444" stroke-width="0.7" fill="none"/><path d="M9 10h4v4h-4z" fill="none" stroke="#888" stroke-width="0.6"/></svg><div class="a" style="left:410px;top:62.5px;width:26px;height:13.5px;background:#fff"></div><div class="t" style="left:412.00px;top:67.07px;font-size:7px;color:#bbb;">0</div><svg style="left:429px;top:63.5px;" width="6" height="11.5" viewBox="0 0 6 11.5"><path d="M1.5 4.25l1.5-1.5 1.5 1.5M1.5 7.75l1.5 1.5 1.5-1.5" stroke="#999" stroke-width="0.7" fill="none"/></svg><div class="a" style="left:437.5px;top:69px;width:1.5px;height:1.5px;background:#aaa"></div><div class="a" style="left:0px;top:79px;width:53px;height:308px;background:#ececec"></div><div class="a" style="left:53px;top:80px;width:100px;height:9.5px;background:#fce9b6"></div><div class="t" style="left:56.50px;top:82.01px;font-size:6.6px;color:#333;transform:scaleX(0.908);transform-origin:0 0;">Womens Football - Varsity - final</div><svg style="left:144px;top:81px;" width="8" height="8" viewBox="0 0 8 8"><path d="M1.5 1.5l5 5M6.5 1.5l-5 5" stroke="#111" stroke-width="1.4"/></svg><svg style="left:599px;top:80px;" width="14" height="9" viewBox="0 0 14 9"><path d="M5 1.5L2 4.5 5 7.5z" fill="#777"/><path d="M9 1.5l3 3-3 3z" fill="#777"/></svg><div class="a" style="left:53px;top:89px;width:560px;height:258px;background:#fde8b6"></div><div class="a" style="left:55px;top:90.5px;width:557px;height:255px;background:#efefef"></div><div class="a" style="left:55px;top:90.5px;width:548px;height:8.5px;background:#f6f6f6"></div><div class="a" style="left:55px;top:90.5px;width:9px;height:8.5px;background:#ececec;border-right:1px solid #aaa;border-bottom:1px solid #aaa"></div><svg style="left:56px;top:90px;" width="7" height="8" viewBox="0 0 7 8"><path d="M3.5 1v7M0 4.5h7" stroke="#777" stroke-width="0.6"/></svg><svg style="left:64px;top:90px;" width="539" height="9" viewBox="0 0 539 9"><path d="M1.92 7.5v2" stroke="#555" stroke-width="0.6"/><path d="M5.70 6v3.5" stroke="#555" stroke-width="0.6"/><path d="M9.48 7.5v2" stroke="#555" stroke-width="0.6"/><path d="M13.26 7.5v2" stroke="#555" stroke-width="0.6"/><path d="M17.04 7.5v2" stroke="#555" stroke-width="0.6"/><path d="M20.82 7.5v2" stroke="#555" stroke-width="0.6"/><path d="M24.60 0.5v9" stroke="#555" stroke-width="0.6"/><path d="M28.38 7.5v2" stroke="#555" stroke-width="0.6"/><path d="M32.16 7.5v2" stroke="#555" stroke-width="0.6"/><path d="M35.94 7.5v2" stroke="#555" stroke-width="0.6"/><path d="M39.72 7.5v2" stroke="#555" stroke-width="0.6"/><path d="M43.50 6v3.5" stroke="#555" stroke-width="0.6"/><path d="M47.28 7.5v2" stroke="#555" stroke-width="0.6"/><path d="M51.06 7.5v2" stroke="#555" stroke-width="0.6"/><path d="M54.84 7.5v2" stroke="#555" stroke-width="0.6"/><path d="M58.62 7.5v2" stroke="#555" stroke-width="0.6"/><path d="M62.40 0.5v9" stroke="#555" stroke-width="0.6"/><path d="M66.18 7.5v2" stroke="#555" stroke-width="0.6"/><path d="M69.96 7.5v2" stroke="#555" stroke-width="0.6"/><path d="M73.74 7.5v2" stroke="#555" stroke-width="0.6"/><path d="M77.52 7.5v2" stroke="#555" stroke-width="0.6"/><path d="M81.30 6v3.5" stroke="#555" stroke-width="0.6"/><path d="M85.08 7.5v2" stroke="#555" stroke-width="0.6"/><path d="M88.86 7.5v2" stroke="#555" stroke-width="0.6"/><path d="M92.64 7.5v2" stroke="#555" stroke-width="0.6"/><path d="M96.42 7.5v2" stroke="#555" stroke-width="0.6"/><path d="M100.20 0.5v9" stroke="#555" stroke-width="0.6"/><path d="M103.98 7.5v2" stroke="#555" stroke-width="0.6"/><path d="M107.76 7.5v2" stroke="#555" stroke-width="0.6"/><path d="M111.54 7.5v2" stroke="#555" stroke-width="0.6"/><path d="M115.32 7.5v2" stroke="#555" stroke-width="0.6"/><path d="M119.10 6v3.5" stroke="#555" stroke-width="0.6"/><path d="M122.88 7.5v2" stroke="#555" stroke-width="0.6"/><path d="M126.66 7.5v2" stroke="#555" stroke-width="0.6"/><path d="M130.44 7.5v2" stroke="#555" stroke-width="0.6"/><path d="M134.22 7.5v2" stroke="#555" stroke-width="0.6"/><path d="M138.00 0.5v9" stroke="#555" stroke-width="0.6"/><path d="M141.78 7.5v2" stroke="#555" stroke-width="0.6"/><path d="M145.56 7.5v2" stroke="#555" stroke-width="0.6"/><path d="M149.34 7.5v2" stroke="#555" stroke-width="0.6"/><path d="M153.12 7.5v2" stroke="#555" stroke-width="0.6"/><path d="M156.90 6v3.5" stroke="#555" stroke-width="0.6"/><path d="M160.68 7.5v2" stroke="#555" stroke-width="0.6"/><path d="M164.46 7.5v2" stroke="#555" stroke-width="0.6"/><path d="M168.24 7.5v2" stroke="#555" stroke-width="0.6"/><path d="M172.02 7.5v2" stroke="#555" stroke-width="0.6"/><path d="M175.80 0.5v9" stroke="#555" stroke-width="0.6"/><path d="M179.58 7.5v2" stroke="#555" stroke-width="0.6"/><path d="M183.36 7.5v2" stroke="#555" stroke-width="0.6"/><path d="M187.14 7.5v2" stroke="#555" stroke-width="0.6"/><path d="M190.92 7.5v2" stroke="#555" stroke-width="0.6"/><path d="M194.70 6v3.5" stroke="#555" stroke-width="0.6"/><path d="M198.48 7.5v2" stroke="#555" stroke-width="0.6"/><path d="M202.26 7.5v2" stroke="#555" stroke-width="0.6"/><path d="M206.04 7.5v2" stroke="#555" stroke-width="0.6"/><path d="M209.82 7.5v2" stroke="#555" stroke-width="0.6"/><path d="M213.60 0.5v9" stroke="#555" stroke-width="0.6"/><path d="M217.38 7.5v2" stroke="#555" stroke-width="0.6"/><path d="M221.16 7.5v2" stroke="#555" stroke-width="0.6"/><path d="M224.94 7.5v2" stroke="#555" stroke-width="0.6"/><path d="M228.72 7.5v2" stroke="#555" stroke-width="0.6"/><path d="M232.50 6v3.5" stroke="#555" stroke-width="0.6"/><path d="M236.28 7.5v2" stroke="#555" stroke-width="0.6"/><path d="M240.06 7.5v2" stroke="#555" stroke-width="0.6"/><path d="M243.84 7.5v2" stroke="#555" stroke-width="0.6"/><path d="M247.62 7.5v2" stroke="#555" stroke-width="0.6"/><path d="M251.40 0.5v9" stroke="#555" stroke-width="0.6"/><path d="M255.18 7.5v2" stroke="#555" stroke-width="0.6"/><path d="M258.96 7.5v2" stroke="#555" stroke-width="0.6"/><path d="M262.74 7.5v2" stroke="#555" stroke-width="0.6"/><path d="M266.52 7.5v2" stroke="#555" stroke-width="0.6"/><path d="M270.30 6v3.5" stroke="#555" stroke-width="0.6"/><path d="M274.08 7.5v2" stroke="#555" stroke-width="0.6"/><path d="M277.86 7.5v2" stroke="#555" stroke-width="0.6"/><path d="M281.64 7.5v2" stroke="#555" stroke-width="0.6"/><path d="M285.42 7.5v2" stroke="#555" stroke-width="0.6"/><path d="M289.20 0.5v9" stroke="#555" stroke-width="0.6"/><path d="M292.98 7.5v2" stroke="#555" stroke-width="0.6"/><path d="M296.76 7.5v2" stroke="#555" stroke-width="0.6"/><path d="M300.54 7.5v2" stroke="#555" stroke-width="0.6"/><path d="M304.32 7.5v2" stroke="#555" stroke-width="0.6"/><path d="M308.10 6v3.5" stroke="#555" stroke-width="0.6"/><path d="M311.88 7.5v2" stroke="#555" stroke-width="0.6"/><path d="M315.66 7.5v2" stroke="#555" stroke-width="0.6"/><path d="M319.44 7.5v2" stroke="#555" stroke-width="0.6"/><path d="M323.22 7.5v2" stroke="#555" stroke-width="0.6"/><path d="M327.00 0.5v9" stroke="#555" stroke-width="0.6"/><path d="M330.78 7.5v2" stroke="#555" stroke-width="0.6"/><path d="M334.56 7.5v2" stroke="#555" stroke-width="0.6"/><path d="M338.34 7.5v2" stroke="#555" stroke-width="0.6"/><path d="M342.12 7.5v2" stroke="#555" stroke-width="0.6"/><path d="M345.90 6v3.5" stroke="#555" stroke-width="0.6"/><path d="M349.68 7.5v2" stroke="#555" stroke-width="0.6"/><path d="M353.46 7.5v2" stroke="#555" stroke-width="0.6"/><path d="M357.24 7.5v2" stroke="#555" stroke-width="0.6"/><path d="M361.02 7.5v2" stroke="#555" stroke-width="0.6"/><path d="M364.80 0.5v9" stroke="#555" stroke-width="0.6"/><path d="M368.58 7.5v2" stroke="#555" stroke-width="0.6"/><path d="M372.36 7.5v2" stroke="#555" stroke-width="0.6"/><path d="M376.14 7.5v2" stroke="#555" stroke-width="0.6"/><path d="M379.92 7.5v2" stroke="#555" stroke-width="0.6"/><path d="M383.70 6v3.5" stroke="#555" stroke-width="0.6"/><path d="M387.48 7.5v2" stroke="#555" stroke-width="0.6"/><path d="M391.26 7.5v2" stroke="#555" stroke-width="0.6"/><path d="M395.04 7.5v2" stroke="#555" stroke-width="0.6"/><path d="M398.82 7.5v2" stroke="#555" stroke-width="0.6"/><path d="M402.60 0.5v9" stroke="#555" stroke-width="0.6"/><path d="M406.38 7.5v2" stroke="#555" stroke-width="0.6"/><path d="M410.16 7.5v2" stroke="#555" stroke-width="0.6"/><path d="M413.94 7.5v2" stroke="#555" stroke-width="0.6"/><path d="M417.72 7.5v2" stroke="#555" stroke-width="0.6"/><path d="M421.50 6v3.5" stroke="#555" stroke-width="0.6"/><path d="M425.28 7.5v2" stroke="#555" stroke-width="0.6"/><path d="M429.06 7.5v2" stroke="#555" stroke-width="0.6"/><path d="M432.84 7.5v2" stroke="#555" stroke-width="0.6"/><path d="M436.62 7.5v2" stroke="#555" stroke-width="0.6"/><path d="M440.40 0.5v9" stroke="#555" stroke-width="0.6"/><path d="M444.18 7.5v2" stroke="#555" stroke-width="0.6"/><path d="M447.96 7.5v2" stroke="#555" stroke-width="0.6"/><path d="M451.74 7.5v2" stroke="#555" stroke-width="0.6"/><path d="M455.52 7.5v2" stroke="#555" stroke-width="0.6"/><path d="M459.30 6v3.5" stroke="#555" stroke-width="0.6"/><path d="M463.08 7.5v2" stroke="#555" stroke-width="0.6"/><path d="M466.86 7.5v2" stroke="#555" stroke-width="0.6"/><path d="M470.64 7.5v2" stroke="#555" stroke-width="0.6"/><path d="M474.42 7.5v2" stroke="#555" stroke-width="0.6"/><path d="M478.20 0.5v9" stroke="#555" stroke-width="0.6"/><path d="M481.98 7.5v2" stroke="#555" stroke-width="0.6"/><path d="M485.76 7.5v2" stroke="#555" stroke-width="0.6"/><path d="M489.54 7.5v2" stroke="#555" stroke-width="0.6"/><path d="M493.32 7.5v2" stroke="#555" stroke-width="0.6"/><path d="M497.10 6v3.5" stroke="#555" stroke-width="0.6"/><path d="M500.88 7.5v2" stroke="#555" stroke-width="0.6"/><path d="M504.66 7.5v2" stroke="#555" stroke-width="0.6"/><path d="M508.44 7.5v2" stroke="#555" stroke-width="0.6"/><path d="M512.22 7.5v2" stroke="#555" stroke-width="0.6"/><path d="M516.00 0.5v9" stroke="#555" stroke-width="0.6"/><path d="M519.78 7.5v2" stroke="#555" stroke-width="0.6"/><path d="M523.56 7.5v2" stroke="#555" stroke-width="0.6"/><path d="M527.34 7.5v2" stroke="#555" stroke-width="0.6"/><path d="M531.12 7.5v2" stroke="#555" stroke-width="0.6"/><path d="M534.90 6v3.5" stroke="#555" stroke-width="0.6"/><path d="M538.68 7.5v2" stroke="#555" stroke-width="0.6"/></svg><div class="t" style="left:89.10px;top:91.27px;font-size:5px;color:#555;">-140</div><div class="t" style="left:126.90px;top:91.27px;font-size:5px;color:#555;">-120</div><div class="t" style="left:164.70px;top:91.27px;font-size:5px;color:#555;">-100</div><div class="t" style="left:202.50px;top:91.27px;font-size:5px;color:#555;">-80</div><div class="t" style="left:240.30px;top:91.27px;font-size:5px;color:#555;">-60</div><div class="t" style="left:278.10px;top:91.27px;font-size:5px;color:#555;">-40</div><div class="t" style="left:315.90px;top:91.27px;font-size:5px;color:#555;">-20</div><div class="t" style="left:353.70px;top:91.27px;font-size:5px;color:#555;">0</div><div class="t" style="left:391.50px;top:91.27px;font-size:5px;color:#555;">20</div><div class="t" style="left:429.30px;top:91.27px;font-size:5px;color:#555;">40</div><div class="t" style="left:467.10px;top:91.27px;font-size:5px;color:#555;">60</div><div class="t" style="left:504.90px;top:91.27px;font-size:5px;color:#555;">80</div><div class="t" style="left:542.70px;top:91.27px;font-size:5px;color:#555;">100</div><div class="t" style="left:580.50px;top:91.27px;font-size:5px;color:#555;">120</div><div class="a" style="left:55px;top:99px;width:9px;height:237px;background:#f6f6f6"></div><svg style="left:55px;top:99px;" width="9" height="237" viewBox="0 0 9 237"><path d="M7 2.62h2" stroke="#555" stroke-width="0.6"/><path d="M5.5 6.40h3.5" stroke="#555" stroke-width="0.6"/><path d="M7 10.18h2" stroke="#555" stroke-width="0.6"/><path d="M7 13.96h2" stroke="#555" stroke-width="0.6"/><path d="M7 17.74h2" stroke="#555" stroke-width="0.6"/><path d="M7 21.52h2" stroke="#555" stroke-width="0.6"/><path d="M0.5 25.30h8.5" stroke="#555" stroke-width="0.6"/><path d="M7 29.08h2" stroke="#555" stroke-width="0.6"/><path d="M7 32.86h2" stroke="#555" stroke-width="0.6"/><path d="M7 36.64h2" stroke="#555" stroke-width="0.6"/><path d="M7 40.42h2" stroke="#555" stroke-width="0.6"/><path d="M5.5 44.20h3.5" stroke="#555" stroke-width="0.6"/><path d="M7 47.98h2" stroke="#555" stroke-width="0.6"/><path d="M7 51.76h2" stroke="#555" stroke-width="0.6"/><path d="M7 55.54h2" stroke="#555" stroke-width="0.6"/><path d="M7 59.32h2" stroke="#555" stroke-width="0.6"/><path d="M0.5 63.10h8.5" stroke="#555" stroke-width="0.6"/><path d="M7 66.88h2" stroke="#555" stroke-width="0.6"/><path d="M7 70.66h2" stroke="#555" stroke-width="0.6"/><path d="M7 74.44h2" stroke="#555" stroke-width="0.6"/><path d="M7 78.22h2" stroke="#555" stroke-width="0.6"/><path d="M5.5 82.00h3.5" stroke="#555" stroke-width="0.6"/><path d="M7 85.78h2" stroke="#555" stroke-width="0.6"/><path d="M7 89.56h2" stroke="#555" stroke-width="0.6"/><path d="M7 93.34h2" stroke="#555" stroke-width="0.6"/><path d="M7 97.12h2" stroke="#555" stroke-width="0.6"/><path d="M0.5 100.90h8.5" stroke="#555" stroke-width="0.6"/><path d="M7 104.68h2" stroke="#555" stroke-width="0.6"/><path d="M7 108.46h2" stroke="#555" stroke-width="0.6"/><path d="M7 112.24h2" stroke="#555" stroke-width="0.6"/><path d="M7 116.02h2" stroke="#555" stroke-width="0.6"/><path d="M5.5 119.80h3.5" stroke="#555" stroke-width="0.6"/><path d="M7 123.58h2" stroke="#555" stroke-width="0.6"/><path d="M7 127.36h2" stroke="#555" stroke-width="0.6"/><path d="M7 131.14h2" stroke="#555" stroke-width="0.6"/><path d="M7 134.92h2" stroke="#555" stroke-width="0.6"/><path d="M0.5 138.70h8.5" stroke="#555" stroke-width="0.6"/><path d="M7 142.48h2" stroke="#555" stroke-width="0.6"/><path d="M7 146.26h2" stroke="#555" stroke-width="0.6"/><path d="M7 150.04h2" stroke="#555" stroke-width="0.6"/><path d="M7 153.82h2" stroke="#555" stroke-width="0.6"/><path d="M5.5 157.60h3.5" stroke="#555" stroke-width="0.6"/><path d="M7 161.38h2" stroke="#555" stroke-width="0.6"/><path d="M7 165.16h2" stroke="#555" stroke-width="0.6"/><path d="M7 168.94h2" stroke="#555" stroke-width="0.6"/><path d="M7 172.72h2" stroke="#555" stroke-width="0.6"/><path d="M0.5 176.50h8.5" stroke="#555" stroke-width="0.6"/><path d="M7 180.28h2" stroke="#555" stroke-width="0.6"/><path d="M7 184.06h2" stroke="#555" stroke-width="0.6"/><path d="M7 187.84h2" stroke="#555" stroke-width="0.6"/><path d="M7 191.62h2" stroke="#555" stroke-width="0.6"/><path d="M5.5 195.40h3.5" stroke="#555" stroke-width="0.6"/><path d="M7 199.18h2" stroke="#555" stroke-width="0.6"/><path d="M7 202.96h2" stroke="#555" stroke-width="0.6"/><path d="M7 206.74h2" stroke="#555" stroke-width="0.6"/><path d="M7 210.52h2" stroke="#555" stroke-width="0.6"/><path d="M0.5 214.30h8.5" stroke="#555" stroke-width="0.6"/><path d="M7 218.08h2" stroke="#555" stroke-width="0.6"/><path d="M7 221.86h2" stroke="#555" stroke-width="0.6"/><path d="M7 225.64h2" stroke="#555" stroke-width="0.6"/><path d="M7 229.42h2" stroke="#555" stroke-width="0.6"/><path d="M5.5 233.20h3.5" stroke="#555" stroke-width="0.6"/><path d="M7 236.98h2" stroke="#555" stroke-width="0.6"/></svg><div class="t" style="left:56px;top:122.8px;font-size:5px;color:#555;transform:rotate(-90deg);transform-origin:0 0">120</div><div class="t" style="left:56px;top:160.6px;font-size:5px;color:#555;transform:rotate(-90deg);transform-origin:0 0">140</div><div class="t" style="left:56px;top:198.4px;font-size:5px;color:#555;transform:rotate(-90deg);transform-origin:0 0">160</div><div class="t" style="left:56px;top:236.2px;font-size:5px;color:#555;transform:rotate(-90deg);transform-origin:0 0">180</div><div class="t" style="left:56px;top:274.0px;font-size:5px;color:#555;transform:rotate(-90deg);transform-origin:0 0">200</div><div class="t" style="left:56px;top:311.8px;font-size:5px;color:#555;transform:rotate(-90deg);transform-origin:0 0">220</div><div class="a" style="left:64px;top:99px;width:539px;height:237px;background:#6a10a8"></div><div class="a" style="left:603px;top:90.5px;width:9px;height:255px;background:#f6f6f6"></div><div class="a" style="left:55px;top:336px;width:548px;height:9.5px;background:#f3f3f3"></div><div class="a" style="left:55.5px;top:336px;width:3px;height:8px;background:#fff;border:1px solid #bbb"></div><svg style="left:603px;top:336px;" width="9" height="9" viewBox="0 0 9 9"><path d="M7 3L3 7M7 5.5L5.5 7" stroke="#aaa" stroke-width="0.7"/></svg><div class="a" style="left:613.5px;top:79px;width:2.2px;height:268px;background:#6e6e6e"></div><div class="a" style="left:17px;top:79px;width:1px;height:190px;background:#dcdcdc"></div><div class="a" style="left:35px;top:79px;width:1px;height:268px;background:#dcdcdc"></div><div class="a" style="left:0px;top:320px;width:17px;height:1px;background:#dcdcdc"></div><div class="a" style="left:18px;top:268px;width:17px;height:1px;background:#dcdcdc"></div><div class="a" style="left:36px;top:346px;width:17px;height:1px;background:#dcdcdc"></div><div class="a" style="left:2px;top:79px;width:13px;height:3px;background-image:radial-gradient(#c4c4c4 0.6px,transparent 0.7px);background-size:2px 2px"></div><div class="a" style="left:20px;top:79px;width:13px;height:3px;background-image:radial-gradient(#c4c4c4 0.6px,transparent 0.7px);background-size:2px 2px"></div><div class="a" style="left:38px;top:79px;width:13px;height:3px;background-image:radial-gradient(#c4c4c4 0.6px,transparent 0.7px);background-size:2px 2px"></div><div class="a" style="left:1px;top:84px;width:16px;height:15.5px;background:#fde9b8"></div><svg style="left:1px;top:84px;" width="16" height="16" viewBox="0 0 16 16"><path d="M3 2.5l8 3.5-3 1.2 4 4.5-1.6 1.4-4-4.5L5 11z" fill="#2a2a8a" stroke="#111" stroke-width="0.4"/></svg><svg style="left:14px;top:97px;" width="3" height="3" viewBox="0 0 3 3"><path d="M3 0v3H0z" fill="#111"/></svg><svg style="left:1px;top:100px;" width="16" height="17" viewBox="0 0 16 17"><path d="M1 8Q6 2 13 2" stroke="#222" stroke-width="0.9" fill="none"/><circle cx="7" cy="4.5" r="1.3" fill="#30a0d0"/><path d="M7 5l6 6" stroke="#2a2a8a" stroke-width="1.6"/><path d="M11 11l3 3" stroke="#111" stroke-width="0.8" stroke-dasharray="1 0.6"/></svg><svg style="left:14px;top:114px;" width="3" height="3" viewBox="0 0 3 3"><path d="M3 0v3H0z" fill="#111"/></svg><svg style="left:1px;top:117px;" width="16" height="17" viewBox="0 0 16 17"><ellipse cx="7" cy="5" rx="4.5" ry="3.5" fill="#e03030" stroke="#555" stroke-width="0.8"/><ellipse cx="9" cy="10" rx="4.5" ry="3.5" fill="#e03030" stroke="#555" stroke-width="0.8"/><path d="M4 5h6M6 10h6" stroke="#fff" stroke-width="1.2"/></svg><svg style="left:14px;top:131px;" width="3" height="3" viewBox="0 0 3 3"><path d="M3 0v3H0z" fill="#111"/></svg><div class="a" style="left:1px;top:134px;width:16px;height:1px;background:#dcdcdc"></div><svg style="left:1px;top:134px;" width="16" height="16" viewBox="0 0 16 16"><path d="M1.5 14.5h4.5v-1.2l-1.3-.3 1-2.8h5l1 2.8-1.3.3v1.2h5.5v-1.2l-1-.3L9.3 1.5H7.7L2.7 13l-1.2.3zM7 8.5l1.8-5 1.8 5z" fill="#1e2a6e"/></svg><svg style="left:1px;top:150px;" width="16" height="17" viewBox="0 0 16 17"><circle cx="4" cy="2" r="1.2" fill="#e03030"/><circle cx="8.5" cy="2" r="1.2" fill="#20a050"/><circle cx="13" cy="2" r="1.2" fill="#30b0e0"/><path d="M4 3.5v3.5M2.3 4.8h3.4M2.8 9l1.2-2 1.2 2" stroke="#e03030" stroke-width="1" fill="none"/><path d="M8.5 3.5v3.5M6.8 4.8h3.4M7.3 9l1.2-2 1.2 2" stroke="#20a050" stroke-width="1" fill="none"/><path d="M13 3.5v3.5M11.3 4.8h3.4M11.8 9l1.2-2 1.2 2" stroke="#30b0e0" stroke-width="1" fill="none"/><path d="M1.5 10.5h13M1.5 12.5h13M1.5 14.5h13" stroke="#5060b0" stroke-width="0.9"/></svg><svg style="left:1px;top:167px;" width="16" height="16" viewBox="0 0 16 16"><path d="M8 1.5l6.5 6.5L8 14.5 1.5 8z" fill="#7a80c8" stroke="#5a60a8" stroke-width="0.6"/><path d="M8 5v6M6 8h4" stroke="#fff" stroke-width="0.8"/></svg><div class="a" style="left:1px;top:181px;width:16px;height:1px;background:#dcdcdc"></div><svg style="left:1px;top:182px;" width="16" height="16" viewBox="0 0 16 16"><circle cx="8" cy="8" r="6.3" fill="none" stroke="#6a70c0" stroke-width="0.6"/><circle cx="8" cy="8" r="4.8" fill="none" stroke="#6a70c0" stroke-width="0.6"/><circle cx="8" cy="8" r="3.3" fill="none" stroke="#6a70c0" stroke-width="0.6"/><circle cx="8" cy="8" r="2" fill="#111"/></svg><svg style="left:1px;top:198px;" width="16" height="16" viewBox="0 0 16 16"><path d="M8 1.5l5.8 3.3v6.6L8 14.7 2.2 11.4V4.8z" fill="#bfe6d8" stroke="#5a70c0" stroke-width="0.8"/><circle cx="8" cy="8" r="3.2" fill="#e03030"/><circle cx="8" cy="8" r="1.8" fill="#111"/></svg><svg style="left:1px;top:214px;" width="16" height="16" viewBox="0 0 16 16"><path d="M8 1.5l5.8 3.3v6.6L8 14.7 2.2 11.4V4.8z" fill="none" stroke="#888" stroke-width="0.7"/><path d="M10 6a3 3 0 1 0 0 4" fill="none" stroke="#888" stroke-width="0.7"/></svg><svg style="left:1px;top:230px;" width="16" height="16" viewBox="0 0 16 16"><path d="M8 1.5l5.8 3.3v6.6L8 14.7 2.2 11.4V4.8z" fill="#111" stroke="#e85040" stroke-width="1.3"/></svg><svg style="left:1px;top:246px;" width="16" height="16" viewBox="0 0 16 16"><defs><linearGradient id="hg" x1="0" x2="1"><stop offset="0" stop-color="#f8f8f8"/><stop offset="1" stop-color="#c8c8c8"/></linearGradient></defs><path d="M8 1.5l5.8 3.3v6.6L8 14.7 2.2 11.4V4.8z" fill="url(#hg)" stroke="#ddd" stroke-width="0.6"/></svg><svg style="left:1px;top:262px;" width="16" height="16" viewBox="0 0 16 16"><path d="M2 4l2-2 9 9-1 3-3-1z" fill="#fff" stroke="#333" stroke-width="0.9"/><path d="M4 5l8 8" stroke="#333" stroke-width="0.5"/></svg><svg style="left:14px;top:275px;" width="3" height="3" viewBox="0 0 3 3"><path d="M3 0v3H0z" fill="#111"/></svg><svg style="left:1px;top:278px;" width="16" height="12" viewBox="0 0 16 12"><path d="M1 3q7-3 14 0v8q-7-3-14 0z" fill="#f4f4f4" stroke="#ccc" stroke-width="0.5"/><circle cx="8" cy="3" r="1.2" fill="#111"/><circle cx="8" cy="9" r="1.2" fill="#111"/></svg><svg style="left:14px;top:287px;" width="3" height="3" viewBox="0 0 3 3"><path d="M3 0v3H0z" fill="#111"/></svg><svg style="left:1px;top:289px;" width="16" height="14" viewBox="0 0 16 14"><path d="M5 6V4a3 3 0 0 1 6 0v2" fill="none" stroke="#777" stroke-width="1.3"/><rect x="3.5" y="6" width="9" height="7" fill="#f8e040" stroke="#807020" stroke-width="0.6"/><rect x="7.5" y="8" width="1" height="3" fill="#333"/></svg><svg style="left:14px;top:300px;" width="3" height="3" viewBox="0 0 3 3"><path d="M3 0v3H0z" fill="#111"/></svg><svg style="left:1px;top:303px;" width="16" height="17" viewBox="0 0 16 17"><rect x="1.5" y="1.5" width="8" height="8" fill="#f4f4f4" stroke="#444" stroke-width="0.8"/><circle cx="10" cy="10" r="5" fill="#ddd" fill-opacity=".6" stroke="#444" stroke-width="0.8"/></svg><svg style="left:14px;top:316px;" width="3" height="3" viewBox="0 0 3 3"><path d="M3 0v3H0z" fill="#111"/></svg><svg style="left:18px;top:84px;" width="17" height="16" viewBox="0 0 17 16"><path d="M11.5 3.5A5 5 0 1 0 11.5 12" fill="none" stroke="#5a60c0" stroke-width="0.9"/><path d="M11 6.5a2 2 0 1 0 0 3" fill="none" stroke="#5a60c0" stroke-width="0.9"/><circle cx="11.5" cy="3.5" r="1.1" fill="#111"/><circle cx="3" cy="8" r="1.1" fill="#111"/><circle cx="11.5" cy="12" r="1.1" fill="#111"/><circle cx="9" cy="8" r="1.1" fill="#111"/><circle cx="11" cy="9.5" r="1.1" fill="#111"/><circle cx="7.5" cy="3" r="1.1" fill="#111"/></svg><svg style="left:18px;top:100px;" width="17" height="17" viewBox="0 0 17 17"><path d="M11.5 3.5A5 5 0 1 0 11.5 12" fill="none" stroke="#5a60c0" stroke-width="0.9"/><path d="M11 6.5a2 2 0 1 0 0 3" fill="none" stroke="#5a60c0" stroke-width="0.9"/><circle cx="11.5" cy="3.5" r="1.1" fill="#111"/><circle cx="3" cy="8" r="1.1" fill="#111"/><circle cx="11.5" cy="12" r="1.1" fill="#111"/><circle cx="9" cy="8" r="1.1" fill="#111"/><circle cx="7.5" cy="13" r="1.1" fill="#111"/></svg><svg style="left:18px;top:117px;" width="17" height="17" viewBox="0 0 17 17"><path d="M2.5 9L7 2.5 11.5 7 14 14M2.5 9l5 3 4-5" fill="none" stroke="#5a60c0" stroke-width="0.9"/><circle cx="2.5" cy="9" r="1.1" fill="#111"/><circle cx="7" cy="2.5" r="1.1" fill="#111"/><circle cx="11.5" cy="7" r="1.1" fill="#111"/><circle cx="14" cy="14" r="1.1" fill="#111"/><circle cx="7.5" cy="12" r="1.1" fill="#111"/></svg><div class="a" style="left:18px;top:134px;width:17px;height:1px;background:#dcdcdc"></div><svg style="left:18px;top:134px;" width="17" height="16" viewBox="0 0 17 16"><rect x="2.5" y="3.5" width="12" height="8" fill="none" stroke="#5a60c0" stroke-width="0.9"/><circle cx="2.5" cy="3.5" r="1.1" fill="#111"/><circle cx="14.5" cy="11.5" r="1.1" fill="#111"/></svg><svg style="left:18px;top:150px;" width="17" height="17" viewBox="0 0 17 17"><ellipse cx="8.5" cy="8.5" rx="6" ry="4" fill="none" stroke="#5a60c0" stroke-width="0.9"/><circle cx="8.5" cy="8.5" r="1.1" fill="#111"/><circle cx="8.5" cy="4.5" r="1.1" fill="#111"/><circle cx="14.5" cy="8.5" r="1.1" fill="#111"/></svg><svg style="left:18px;top:167px;" width="17" height="16" viewBox="0 0 17 16"><path d="M8.5 7C6 5 5 3.5 6.5 2.3 7.5 1.5 8.5 2.5 8.5 3 8.5 2.5 9.5 1.5 10.5 2.3 12 3.5 11 5 8.5 7z" fill="none" stroke="#5a60c0" stroke-width="0.8"/><path d="M2 15l3-5 3 5z" fill="none" stroke="#5a60c0" stroke-width="0.8"/><path d="M10 10h3l1.5 2.5L13 15h-3l-1.5-2.5z" fill="none" stroke="#5a60c0" stroke-width="0.8"/></svg><div class="a" style="left:18px;top:181px;width:17px;height:1px;background:#dcdcdc"></div><svg style="left:18px;top:182px;" width="17" height="16" viewBox="0 0 17 16"><path d="M3.5 3q3 1 3 4t2.5 0 2 2 1 1.5 2 3" fill="none" stroke="#5a60c0" stroke-width="0.9"/><circle cx="3" cy="3" r="1.1" fill="#111"/></svg><svg style="left:18px;top:198px;" width="17" height="16" viewBox="0 0 17 16"><path d="M3.5 3q2 6 5 6 1-4-2-2 0 4 4 6t3-4-5-5" fill="none" stroke="#5a60c0" stroke-width="0.9"/><circle cx="3" cy="3" r="1.1" fill="#111"/></svg><div class="a" style="left:18px;top:214px;width:17px;height:1px;background:#dcdcdc"></div><svg style="left:18px;top:215px;" width="17" height="16" viewBox="0 0 17 16"><path d="M8.5 1.5v5M6 4h5" stroke="#e03030" stroke-width="1.6"/><path d="M3 12q5.5-6 11 0" fill="none" stroke="#222" stroke-width="0.9"/><path d="M5 13l2-5M12 13l-2-5" stroke="#e03030" stroke-width="1.3"/><circle cx="3" cy="12" r="1.1" fill="#111"/><circle cx="14" cy="12" r="1.1" fill="#111"/><circle cx="7" cy="8" r="1.1" fill="#111"/><circle cx="10" cy="8" r="1.1" fill="#111"/></svg><svg style="left:32px;top:229px;" width="3" height="3" viewBox="0 0 3 3"><path d="M3 0v3H0z" fill="#111"/></svg><div class="a" style="left:18px;top:231px;width:17px;height:1px;background:#dcdcdc"></div><svg style="left:18px;top:232px;" width="17" height="16" viewBox="0 0 17 16"><circle cx="8.5" cy="8" r="6.3" fill="#aaa" stroke="#444" stroke-width="0.7"/><path d="M7.5 5.5a2.5 2.5 0 1 0 0 5M12.5 5.5a2.5 2.5 0 1 0 0 5" fill="none" stroke="#fff" stroke-width="1.5"/></svg><svg style="left:32px;top:246px;" width="3" height="3" viewBox="0 0 3 3"><path d="M3 0v3H0z" fill="#111"/></svg><div class="a" style="left:18px;top:249px;width:17px;height:1px;background:#dcdcdc"></div><svg style="left:18px;top:251px;" width="17" height="16" viewBox="0 0 17 16"><path d="M3 13A6 6 0 1 1 14 13h-3.5a2.5 2.5 0 1 0-4 0z" fill="#f08090" stroke="#5a60c0" stroke-width="0.9"/><path d="M5 6a4 4 0 0 1 6 0" stroke="#fff" stroke-width="0.8" fill="none" opacity=".7"/></svg><svg style="left:32px;top:265px;" width="3" height="3" viewBox="0 0 3 3"><path d="M3 0v3H0z" fill="#111"/></svg><svg style="left:36px;top:84px;" width="17" height="16" viewBox="0 0 17 16"><path d="M3 13L14 3" stroke="#e03030" stroke-width="0.9" stroke-dasharray="1.4 1"/><circle cx="3" cy="13" r="1.1" fill="#111"/><circle cx="14" cy="3" r="1.1" fill="#111"/><text x="10" y="12" font-size="7" font-family="Liberation Sans" fill="#111">1</text></svg><svg style="left:50px;top:97px;" width="3" height="3" viewBox="0 0 3 3"><path d="M3 0v3H0z" fill="#111"/></svg><svg style="left:36px;top:100px;" width="17" height="17" viewBox="0 0 17 17"><path d="M2.5 3Q8.5 10 14.5 3" fill="none" stroke="#e03030" stroke-width="1.3"/><path d="M2.5 8Q8.5 15 14.5 8" fill="none" stroke="#333" stroke-width="1.1"/><circle cx="8.5" cy="6.5" r="1.1" fill="#e03030"/></svg><svg style="left:36px;top:117px;" width="17" height="17" viewBox="0 0 17 17"><ellipse cx="8.5" cy="6" rx="6" ry="3.5" fill="none" stroke="#e03030" stroke-width="1.3"/><ellipse cx="8.5" cy="10" rx="6" ry="3.5" fill="none" stroke="#333" stroke-width="1"/><circle cx="8.5" cy="2.5" r="1" fill="#e03030"/></svg><div class="a" style="left:36px;top:134px;width:17px;height:1px;background:#dcdcdc"></div><svg style="left:36px;top:134px;" width="17" height="16" viewBox="0 0 17 16"><path d="M2 6l4 4 3-8 5 3 1 8" fill="none" stroke="#222" stroke-width="0.9"/><path d="M2 6l4 4M9 2l5 3" stroke="#e03030" stroke-width="1.5"/><circle cx="2" cy="6" r="1.1" fill="#111"/><circle cx="6" cy="10" r="1.1" fill="#111"/><circle cx="9" cy="2" r="1.1" fill="#111"/><circle cx="14" cy="5" r="1.1" fill="#111"/><circle cx="15" cy="13" r="1.1" fill="#111"/></svg><svg style="left:36px;top:150px;" width="17" height="17" viewBox="0 0 17 17"><path d="M8.5 2L14.5 7v7h-12V7z" fill="none" stroke="#222" stroke-width="0.9"/><path d="M14.5 8v5M2.5 8v5" stroke="#e03030" stroke-width="1.4"/><circle cx="8.5" cy="2" r="1.1" fill="#111"/><circle cx="14.5" cy="7" r="1.1" fill="#111"/><circle cx="14.5" cy="14" r="1.1" fill="#111"/><circle cx="2.5" cy="14" r="1.1" fill="#111"/><circle cx="2.5" cy="7" r="1.1" fill="#111"/></svg><svg style="left:36px;top:167px;" width="17" height="16" viewBox="0 0 17 16"><path d="M2.5 3A12 12 0 0 1 14.5 14" fill="none" stroke="#222" stroke-width="0.9"/><path d="M2.5 7A8 8 0 0 1 10.5 14" fill="none" stroke="#222" stroke-width="0.9"/><path d="M2.5 5A10 10 0 0 1 12.5 14" fill="none" stroke="#e03030" stroke-width="1.5"/><circle cx="2.5" cy="3" r="1.1" fill="#111"/><circle cx="14.5" cy="14" r="1.1" fill="#111"/><circle cx="10.5" cy="14" r="1.1" fill="#111"/></svg><div class="a" style="left:36px;top:181px;width:17px;height:1px;background:#dcdcdc"></div><svg style="left:36px;top:182px;" width="17" height="16" viewBox="0 0 17 16"><circle cx="8.5" cy="8" r="6" fill="none" stroke="#333" stroke-width="0.9"/><path d="M8.5 2v12" stroke="#e03030" stroke-width="1.4"/><path d="M8.5 8h6" stroke="#333" stroke-width="0.6"/><circle cx="3.5" cy="5" r="1.1" fill="#111"/><circle cx="13" cy="12" r="1.1" fill="#111"/></svg><svg style="left:36px;top:198px;" width="17" height="16" viewBox="0 0 17 16"><circle cx="8.5" cy="8" r="6" fill="none" stroke="#333" stroke-width="0.9"/><path d="M4 4l4.5 5 5-3M8.5 9v5" stroke="#e03030" stroke-width="1.4" fill="none"/><circle cx="3.5" cy="5" r="1.1" fill="#111"/><circle cx="13" cy="12" r="1.1" fill="#111"/></svg><div class="a" style="left:36px;top:214px;width:17px;height:1px;background:#dcdcdc"></div><svg style="left:36px;top:215px;" width="17" height="16" viewBox="0 0 17 16"><circle cx="8.5" cy="8" r="6" fill="none" stroke="#e03030" stroke-width="1.1" stroke-dasharray="1 0.8"/><circle cx="8.5" cy="8" r="3.5" fill="none" stroke="#e03030" stroke-width="1" stroke-dasharray="1 0.8"/><circle cx="8.5" cy="8" r="1.3" fill="#111"/><circle cx="8.5" cy="2" r="1.1" fill="#111"/><circle cx="14.5" cy="8" r="1.1" fill="#111"/><circle cx="2.5" cy="8" r="1.1" fill="#111"/></svg><div class="a" style="left:36px;top:231px;width:17px;height:1px;background:#dcdcdc"></div><svg style="left:37px;top:234px;" width="16" height="9" viewBox="0 0 16 9"><path d="M1 1.5l2 3-2 3M3.5 1.5l2 3-2 3" stroke="#999" stroke-width="0.7" fill="none"/><path d="M11 1l4 3.5-4 3.5z" fill="#111"/></svg><div class="a" style="left:38px;top:244px;width:13px;height:3px;background-image:radial-gradient(#c4c4c4 0.6px,transparent 0.7px);background-size:2px 2px"></div><svg style="left:36px;top:247px;" width="17" height="16" viewBox="0 0 17 16"><circle cx="5" cy="4" r="2" fill="#30b0e0"/><circle cx="12" cy="4" r="2" fill="#e070c0"/><circle cx="8.5" cy="3" r="2" fill="#40b040"/><rect x="6.5" y="7" width="4" height="3" fill="#f08020"/><path d="M8.5 5v2M4 7l3 2M13 7l-3 2" stroke="#5a60c0" stroke-width="0.6"/><path d="M2 13h13M2 13l2.5-1.5v3zM15 13l-2.5-1.5v3z" stroke="#3a4aa0" stroke-width="0.8" fill="#3a4aa0"/></svg><svg style="left:36px;top:263px;" width="17" height="17" viewBox="0 0 17 17"><circle cx="8.5" cy="3" r="1.5" fill="#60c060"/><path d="M5 4q3 6 7 0M8.5 5v5M3 8h11" stroke="#aab" stroke-width="0.7" fill="none"/><path d="M2 14h13M2 14l2.5-1.5v3zM15 14l-2.5-1.5v3z" stroke="#3a4aa0" stroke-width="0.8" fill="#3a4aa0"/></svg><svg style="left:36px;top:280px;" width="17" height="14" viewBox="0 0 17 14"><path d="M2 8L4 2l2 6 2-6 2 6 2-6 2 6" stroke="#e03030" stroke-width="1.2" fill="none"/><path d="M2 11h13M2 11l2.5-1.5v3zM15 11l-2.5-1.5v3z" stroke="#3a4aa0" stroke-width="0.8" fill="#3a4aa0"/></svg><svg style="left:36px;top:294px;" width="17" height="16" viewBox="0 0 17 16"><ellipse cx="8" cy="7" rx="3.5" ry="5" fill="#1c70d0" stroke="#123a80" stroke-width="0.6"/><path d="M6 4l4 6" stroke="#fff" stroke-width="0.6"/><path d="M11 4q3 0 3 4" stroke="#555" stroke-width="0.6" fill="none"/><path d="M2 14h13M2 14l2.5-1.5v3zM15 14l-2.5-1.5v3z" stroke="#3a4aa0" stroke-width="0.8" fill="#3a4aa0"/></svg><svg style="left:36px;top:310px;" width="17" height="16" viewBox="0 0 17 16"><path d="M6 1h3v8H6z" fill="#ddd" stroke="#777" stroke-width="0.6"/><path d="M3 9h11" stroke="#e03030" stroke-width="1.2"/><path d="M10 3v6" stroke="#e03030" stroke-width="0.8"/><path d="M2 13h13M2 13l2.5-1.5v3zM15 13l-2.5-1.5v3z" stroke="#3a4aa0" stroke-width="0.8" fill="#3a4aa0"/></svg><svg style="left:36px;top:326px;" width="17" height="16" viewBox="0 0 17 16"><circle cx="5" cy="4" r="1.8" fill="none" stroke="#222" stroke-width="0.9"/><circle cx="10" cy="4" r="1.8" fill="none" stroke="#222" stroke-width="0.9"/><path d="M5.5 6l5 5M9.5 6l-4 5" stroke="#333" stroke-width="1"/><path d="M2 9l13-3" stroke="#e03030" stroke-width="1.2"/><path d="M2 12h13M2 12l2.5-1.5v3zM15 12l-2.5-1.5v3z" stroke="#3a4aa0" stroke-width="0.8" fill="#3a4aa0"/></svg><svg style="left:37px;top:338px;" width="16" height="9" viewBox="0 0 16 9"><path d="M1 1.5l2 3-2 3M3.5 1.5l2 3-2 3" stroke="#999" stroke-width="0.7" fill="none"/><path d="M11 1l4 3.5-4 3.5z" fill="#111"/></svg><div class="a" style="left:64px;top:99px;width:539px;height:237px;overflow:hidden"><svg style="left:-64px;top:-99px" width="768" height="407" viewBox="0 0 768 407"><defs>
<pattern id="hz" width="1.8" height="4" patternUnits="userSpaceOnUse" patternTransform="rotate(-8)"><rect width="1.8" height="4" fill="#cdb840"/><rect width="0.8" height="4" fill="#8c7a22"/></pattern>
<pattern id="vt" width="1.6" height="4" patternUnits="userSpaceOnUse"><rect width="1.6" height="4" fill="#d2bf44"/><rect width="0.6" height="4" fill="#8a7a22"/></pattern>
</defs><g transform="translate(0.7,0.9)"><path d="M144.5,166.5 C146,161 152.5,161 151.5,168 L139.5,208 C138.5,211 135.5,211 136,207 Z" fill="#6e5e14"/><path d="M137.5,208 L163,175" stroke="#6e5e14" stroke-width="2.6" stroke-linecap="round" fill="none"/><path d="M167.5,161 C161.5,177 165,200.5 178.5,201.5 C192,202.5 195.5,185 190,170 C186.5,161.5 181,158.5 178,158" transform="translate(-0.7,-0.9)" stroke="#6e5e14" stroke-width="5.10" stroke-linecap="round" stroke-linejoin="round" fill="none"/><path d="M167.5,161 C161.5,177 165,200.5 178.5,201.5 C192,202.5 195.5,185 190,170 C186.5,161.5 181,158.5 178,158" transform="translate(0.7,0.9)" stroke="#6e5e14" stroke-width="5.10" stroke-linecap="round" stroke-linejoin="round" fill="none"/><path d="M167.5,161 C161.5,177 165,200.5 178.5,201.5 C192,202.5 195.5,185 190,170 C186.5,161.5 181,158.5 178,158" transform="translate(0,0)" stroke="#6e5e14" stroke-width="5.10" stroke-linecap="round" stroke-linejoin="round" fill="none"/><path d="M228,191 L233.5,168.5 Q238,161.5 243.5,166 L240.5,187" transform="translate(-0.7,-0.9)" stroke="#6e5e14" stroke-width="4.25" stroke-linecap="round" stroke-linejoin="round" fill="none"/><path d="M228,191 L233.5,168.5 Q238,161.5 243.5,166 L240.5,187" transform="translate(0.7,0.9)" stroke="#6e5e14" stroke-width="4.25" stroke-linecap="round" stroke-linejoin="round" fill="none"/><path d="M228,191 L233.5,168.5 Q238,161.5 243.5,166 L240.5,187" transform="translate(0,0)" stroke="#6e5e14" stroke-width="4.25" stroke-linecap="round" stroke-linejoin="round" fill="none"/><path d="M243.5,167 Q251,158.5 258.5,162.5 L255.5,184" transform="translate(-0.7,-0.9)" stroke="#6e5e14" stroke-width="4.25" stroke-linecap="round" stroke-linejoin="round" fill="none"/><path d="M243.5,167 Q251,158.5 258.5,162.5 L255.5,184" transform="translate(0.7,0.9)" stroke="#6e5e14" stroke-width="4.25" stroke-linecap="round" stroke-linejoin="round" fill="none"/><path d="M243.5,167 Q251,158.5 258.5,162.5 L255.5,184" transform="translate(0,0)" stroke="#6e5e14" stroke-width="4.25" stroke-linecap="round" stroke-linejoin="round" fill="none"/><path d="M255.5,184 Q257.5,188 264,181" transform="translate(-0.7,-0.9)" stroke="#6e5e14" stroke-width="2.98" stroke-linecap="round" stroke-linejoin="round" fill="none"/><path d="M255.5,184 Q257.5,188 264,181" transform="translate(0.7,0.9)" stroke="#6e5e14" stroke-width="2.98" stroke-linecap="round" stroke-linejoin="round" fill="none"/><path d="M255.5,184 Q257.5,188 264,181" transform="translate(0,0)" stroke="#6e5e14" stroke-width="2.98" stroke-linecap="round" stroke-linejoin="round" fill="none"/><path d="M273.5,177 Q284,172 287.5,163 Q289,154.5 283,155.5 Q271,159 271,173 Q272,183 292,174" transform="translate(-0.7,-0.9)" stroke="#6e5e14" stroke-width="3.91" stroke-linecap="round" stroke-linejoin="round" fill="none"/><path d="M273.5,177 Q284,172 287.5,163 Q289,154.5 283,155.5 Q271,159 271,173 Q272,183 292,174" transform="translate(0.7,0.9)" stroke="#6e5e14" stroke-width="3.91" stroke-linecap="round" stroke-linejoin="round" fill="none"/><path d="M273.5,177 Q284,172 287.5,163 Q289,154.5 283,155.5 Q271,159 271,173 Q272,183 292,174" transform="translate(0,0)" stroke="#6e5e14" stroke-width="3.91" stroke-linecap="round" stroke-linejoin="round" fill="none"/><path d="M299.5,174 L304,153 Q309,146.5 314.5,148.5 Q317,150.5 315.5,156 L312,170 Q313,174 319,169" transform="translate(-0.7,-0.9)" stroke="#6e5e14" stroke-width="3.91" stroke-linecap="round" stroke-linejoin="round" fill="none"/><path d="M299.5,174 L304,153 Q309,146.5 314.5,148.5 Q317,150.5 315.5,156 L312,170 Q313,174 319,169" transform="translate(0.7,0.9)" stroke="#6e5e14" stroke-width="3.91" stroke-linecap="round" stroke-linejoin="round" fill="none"/><path d="M299.5,174 L304,153 Q309,146.5 314.5,148.5 Q317,150.5 315.5,156 L312,170 Q313,174 319,169" transform="translate(0,0)" stroke="#6e5e14" stroke-width="3.91" stroke-linecap="round" stroke-linejoin="round" fill="none"/><path d="M345.5,140.5 Q339,139.5 337.5,146 Q338,151 343,155 Q347.5,160 344.5,164.5 Q340.5,168.5 334,166" transform="translate(-0.7,-0.9)" stroke="#6e5e14" stroke-width="3.74" stroke-linecap="round" stroke-linejoin="round" fill="none"/><path d="M345.5,140.5 Q339,139.5 337.5,146 Q338,151 343,155 Q347.5,160 344.5,164.5 Q340.5,168.5 334,166" transform="translate(0.7,0.9)" stroke="#6e5e14" stroke-width="3.74" stroke-linecap="round" stroke-linejoin="round" fill="none"/><path d="M345.5,140.5 Q339,139.5 337.5,146 Q338,151 343,155 Q347.5,160 344.5,164.5 Q340.5,168.5 334,166" transform="translate(0,0)" stroke="#6e5e14" stroke-width="3.74" stroke-linecap="round" stroke-linejoin="round" fill="none"/><ellipse cx="209.2" cy="185.5" rx="7" ry="12.6" transform="rotate(20 209.2 185.5)" fill="none" stroke="#6e5e14" stroke-width="4.8"/><path d="M332.5,114.8 C335.5,114 337.5,117 335.8,120.5 L329.3,132.5 L328.2,131.8 L331.2,120 C330.8,117.5 331.3,115.5 332.5,114.8 Z" fill="#6e5e14"/></g><g transform="translate(0,0)"><path d="M144.5,166.5 C146,161 152.5,161 151.5,168 L139.5,208 C138.5,211 135.5,211 136,207 Z" fill="#dcc94a"/><path d="M137.5,208 L163,175" stroke="#dcc94a" stroke-width="2.6" stroke-linecap="round" fill="none"/><path d="M167.5,161 C161.5,177 165,200.5 178.5,201.5 C192,202.5 195.5,185 190,170 C186.5,161.5 181,158.5 178,158" transform="translate(-0.7,-0.9)" stroke="#dcc94a" stroke-width="5.10" stroke-linecap="round" stroke-linejoin="round" fill="none"/><path d="M167.5,161 C161.5,177 165,200.5 178.5,201.5 C192,202.5 195.5,185 190,170 C186.5,161.5 181,158.5 178,158" transform="translate(0.7,0.9)" stroke="#dcc94a" stroke-width="5.10" stroke-linecap="round" stroke-linejoin="round" fill="none"/><path d="M167.5,161 C161.5,177 165,200.5 178.5,201.5 C192,202.5 195.5,185 190,170 C186.5,161.5 181,158.5 178,158" transform="translate(0,0)" stroke="#dcc94a" stroke-width="5.10" stroke-linecap="round" stroke-linejoin="round" fill="none"/><path d="M228,191 L233.5,168.5 Q238,161.5 243.5,166 L240.5,187" transform="translate(-0.7,-0.9)" stroke="#dcc94a" stroke-width="4.25" stroke-linecap="round" stroke-linejoin="round" fill="none"/><path d="M228,191 L233.5,168.5 Q238,161.5 243.5,166 L240.5,187" transform="translate(0.7,0.9)" stroke="#dcc94a" stroke-width="4.25" stroke-linecap="round" stroke-linejoin="round" fill="none"/><path d="M228,191 L233.5,168.5 Q238,161.5 243.5,166 L240.5,187" transform="translate(0,0)" stroke="#dcc94a" stroke-width="4.25" stroke-linecap="round" stroke-linejoin="round" fill="none"/><path d="M243.5,167 Q251,158.5 258.5,162.5 L255.5,184" transform="translate(-0.7,-0.9)" stroke="#dcc94a" stroke-width="4.25" stroke-linecap="round" stroke-linejoin="round" fill="none"/><path d="M243.5,167 Q251,158.5 258.5,162.5 L255.5,184" transform="translate(0.7,0.9)" stroke="#dcc94a" stroke-width="4.25" stroke-linecap="round" stroke-linejoin="round" fill="none"/><path d="M243.5,167 Q251,158.5 258.5,162.5 L255.5,184" transform="translate(0,0)" stroke="#dcc94a" stroke-width="4.25" stroke-linecap="round" stroke-linejoin="round" fill="none"/><path d="M255.5,184 Q257.5,188 264,181" transform="translate(-0.7,-0.9)" stroke="#dcc94a" stroke-width="2.98" stroke-linecap="round" stroke-linejoin="round" fill="none"/><path d="M255.5,184 Q257.5,188 264,181" transform="translate(0.7,0.9)" stroke="#dcc94a" stroke-width="2.98" stroke-linecap="round" stroke-linejoin="round" fill="none"/><path d="M255.5,184 Q257.5,188 264,181" transform="translate(0,0)" stroke="#dcc94a" stroke-width="2.98" stroke-linecap="round" stroke-linejoin="round" fill="none"/><path d="M273.5,177 Q284,172 287.5,163 Q289,154.5 283,155.5 Q271,159 271,173 Q272,183 292,174" transform="translate(-0.7,-0.9)" stroke="#dcc94a" stroke-width="3.91" stroke-linecap="round" stroke-linejoin="round" fill="none"/><path d="M273.5,177 Q284,172 287.5,163 Q289,154.5 283,155.5 Q271,159 271,173 Q272,183 292,174" transform="translate(0.7,0.9)" stroke="#dcc94a" stroke-width="3.91" stroke-linecap="round" stroke-linejoin="round" fill="none"/><path d="M273.5,177 Q284,172 287.5,163 Q289,154.5 283,155.5 Q271,159 271,173 Q272,183 292,174" transform="translate(0,0)" stroke="#dcc94a" stroke-width="3.91" stroke-linecap="round" stroke-linejoin="round" fill="none"/><path d="M299.5,174 L304,153 Q309,146.5 314.5,148.5 Q317,150.5 315.5,156 L312,170 Q313,174 319,169" transform="translate(-0.7,-0.9)" stroke="#dcc94a" stroke-width="3.91" stroke-linecap="round" stroke-linejoin="round" fill="none"/><path d="M299.5,174 L304,153 Q309,146.5 314.5,148.5 Q317,150.5 315.5,156 L312,170 Q313,174 319,169" transform="translate(0.7,0.9)" stroke="#dcc94a" stroke-width="3.91" stroke-linecap="round" stroke-linejoin="round" fill="none"/><path d="M299.5,174 L304,153 Q309,146.5 314.5,148.5 Q317,150.5 315.5,156 L312,170 Q313,174 319,169" transform="translate(0,0)" stroke="#dcc94a" stroke-width="3.91" stroke-linecap="round" stroke-linejoin="round" fill="none"/><path d="M345.5,140.5 Q339,139.5 337.5,146 Q338,151 343,155 Q347.5,160 344.5,164.5 Q340.5,168.5 334,166" transform="translate(-0.7,-0.9)" stroke="#dcc94a" stroke-width="3.74" stroke-linecap="round" stroke-linejoin="round" fill="none"/><path d="M345.5,140.5 Q339,139.5 337.5,146 Q338,151 343,155 Q347.5,160 344.5,164.5 Q340.5,168.5 334,166" transform="translate(0.7,0.9)" stroke="#dcc94a" stroke-width="3.74" stroke-linecap="round" stroke-linejoin="round" fill="none"/><path d="M345.5,140.5 Q339,139.5 337.5,146 Q338,151 343,155 Q347.5,160 344.5,164.5 Q340.5,168.5 334,166" transform="translate(0,0)" stroke="#dcc94a" stroke-width="3.74" stroke-linecap="round" stroke-linejoin="round" fill="none"/><ellipse cx="209.2" cy="185.5" rx="7" ry="12.6" transform="rotate(20 209.2 185.5)" fill="none" stroke="#dcc94a" stroke-width="4.8"/><path d="M332.5,114.8 C335.5,114 337.5,117 335.8,120.5 L329.3,132.5 L328.2,131.8 L331.2,120 C330.8,117.5 331.3,115.5 332.5,114.8 Z" fill="#dcc94a"/></g><path d="M180.0,214.6 L184.1,213.5 L188.2,212.5 L192.3,211.5 L196.4,210.5 L200.6,209.5 L204.7,208.6 L208.8,207.6 L212.9,206.8 L217.0,205.9 L217.0,221.9 L212.5,222.9 L208.0,223.9 L208.0,218.9 L203.8,219.8 L199.7,220.8 L195.5,221.8 L195.5,240.3 L199.7,239.3 L203.8,238.4 L208.0,237.4 L208.0,250.0 L203.8,250.9 L199.7,251.9 L195.5,252.9 L195.5,268.0 L200.0,266.9 L200.0,277.9 L196.0,278.9 L192.0,279.9 L188.0,280.9 L184.0,281.9 L180.0,283.0 L180.0,271.9 L184.0,270.9 L184.0,224.6 L180.0,225.7Z" fill="#6e5e14" fill-rule="evenodd" transform="translate(0.7,0.9)"/><path d="M180.0,214.6 L184.1,213.5 L188.2,212.5 L192.3,211.5 L196.4,210.5 L200.6,209.5 L204.7,208.6 L208.8,207.6 L212.9,206.8 L217.0,205.9 L217.0,221.9 L212.5,222.9 L208.0,223.9 L208.0,218.9 L203.8,219.8 L199.7,220.8 L195.5,221.8 L195.5,240.3 L199.7,239.3 L203.8,238.4 L208.0,237.4 L208.0,250.0 L203.8,250.9 L199.7,251.9 L195.5,252.9 L195.5,268.0 L200.0,266.9 L200.0,277.9 L196.0,278.9 L192.0,279.9 L188.0,280.9 L184.0,281.9 L180.0,283.0 L180.0,271.9 L184.0,270.9 L184.0,224.6 L180.0,225.7Z" fill="#dcc94a" fill-rule="evenodd" stroke="#9c8a26" stroke-width="0.6" stroke-opacity="0.8"/><path d="M180.0,214.6 L184.1,213.5 L188.2,212.5 L192.3,211.5 L196.4,210.5 L200.6,209.5 L204.7,208.6 L208.8,207.6 L212.9,206.8 L217.0,205.9 L217.0,216.9 L212.9,217.8 L208.8,218.7 L204.7,219.6 L200.6,220.6 L196.4,221.5 L192.3,222.5 L188.2,223.5 L184.1,224.6 L180.0,225.7Z" fill="url(#hz)" opacity="0.8"/><path d="M180.0,271.9 L184.0,270.9 L188.0,269.8 L192.0,268.8 L196.0,267.9 L200.0,266.9 L200.0,277.9 L196.0,278.9 L192.0,279.9 L188.0,280.9 L184.0,281.9 L180.0,283.0Z" fill="url(#hz)" opacity="0.8"/><path d="M184.0,224.6 L189.8,223.2 L195.5,221.8 L195.5,268.0 L189.8,269.4 L184.0,270.9Z" fill="url(#vt)" opacity="0.6"/><path d="M234.5,202.5 L239.5,201.6 L244.5,200.7 L249.5,199.9 L254.2,203.9 L259.0,207.9 L259.0,257.0 L254.2,262.5 L249.5,268.0 L244.5,268.9 L239.5,269.7 L234.5,270.7 L229.8,266.8 L225.0,263.0 L225.0,213.8 L229.8,208.1Z M238.3,212.8 L245.7,211.5 L249.7,214.9 L249.7,253.0 L245.7,257.6 L238.3,258.9 L234.3,255.7 L234.3,217.5Z" fill="#6e5e14" fill-rule="evenodd" transform="translate(0.7,0.9)"/><path d="M234.5,202.5 L239.5,201.6 L244.5,200.7 L249.5,199.9 L254.2,203.9 L259.0,207.9 L259.0,257.0 L254.2,262.5 L249.5,268.0 L244.5,268.9 L239.5,269.7 L234.5,270.7 L229.8,266.8 L225.0,263.0 L225.0,213.8 L229.8,208.1Z M238.3,212.8 L245.7,211.5 L249.7,214.9 L249.7,253.0 L245.7,257.6 L238.3,258.9 L234.3,255.7 L234.3,217.5Z" fill="#dcc94a" fill-rule="evenodd" stroke="#9c8a26" stroke-width="0.6" stroke-opacity="0.8"/><path d="M234.0,202.6 L239.2,201.6 L244.3,200.7 L249.5,199.9 L254.0,203.7 L258.5,207.5 L253.2,209.8 L248.0,212.2 L243.7,212.9 L239.3,213.6 L235.0,214.4 L230.0,213.8 L225.0,213.3 L229.5,207.9Z" fill="url(#hz)" opacity="0.7"/><path d="M225.0,263.5 L230.0,261.0 L235.0,258.5 L239.3,257.7 L243.7,257.0 L248.0,256.3 L253.2,256.9 L258.5,257.6 L254.0,262.8 L249.5,268.0 L244.3,268.9 L239.2,269.8 L234.0,270.7 L229.5,267.1Z" fill="url(#hz)" opacity="0.7"/><path d="M276.0,196.1 L280.2,195.6 L284.5,195.1 L288.8,194.7 L293.0,194.3 L297.8,198.6 L302.5,202.9 L302.5,251.9 L297.8,257.1 L293.0,262.3 L288.8,262.8 L284.5,263.2 L280.2,263.7 L276.0,264.2 L271.2,260.1 L266.5,256.0 L266.5,206.9 L271.2,201.5Z M280.0,206.7 L284.5,206.2 L289.0,205.7 L293.0,209.3 L293.0,247.3 L289.0,251.7 L284.5,252.2 L280.0,252.7 L276.0,249.2 L276.0,211.2Z" fill="#6e5e14" fill-rule="evenodd" transform="translate(0.7,0.9)"/><path d="M276.0,196.1 L280.2,195.6 L284.5,195.1 L288.8,194.7 L293.0,194.3 L297.8,198.6 L302.5,202.9 L302.5,251.9 L297.8,257.1 L293.0,262.3 L288.8,262.8 L284.5,263.2 L280.2,263.7 L276.0,264.2 L271.2,260.1 L266.5,256.0 L266.5,206.9 L271.2,201.5Z M280.0,206.7 L284.5,206.2 L289.0,205.7 L293.0,209.3 L293.0,247.3 L289.0,251.7 L284.5,252.2 L280.0,252.7 L276.0,249.2 L276.0,211.2Z" fill="#dcc94a" fill-rule="evenodd" stroke="#9c8a26" stroke-width="0.6" stroke-opacity="0.8"/><path d="M276.0,196.1 L280.2,195.6 L284.5,195.1 L288.8,194.7 L293.0,194.3 L297.8,198.6 L302.5,202.9 L297.2,204.6 L292.0,206.4 L287.0,206.9 L282.0,207.4 L277.0,208.0 L271.8,207.4 L266.5,206.9 L271.2,201.5Z" fill="url(#hz)" opacity="0.7"/><path d="M266.5,256.0 L271.8,254.0 L277.0,252.1 L282.0,251.5 L287.0,250.9 L292.0,250.4 L297.2,251.2 L302.5,251.9 L297.8,257.1 L293.0,262.3 L288.8,262.8 L284.5,263.2 L280.2,263.7 L276.0,264.2 L271.2,260.1Z" fill="url(#hz)" opacity="0.7"/><path d="M307.0,193.0 L311.2,192.7 L315.4,192.4 L319.6,192.2 L323.8,192.0 L328.0,191.7 L332.2,191.6 L336.4,191.4 L340.6,191.3 L344.8,191.2 L349.0,191.1 L349.0,211.1 L343.0,211.2 L343.0,203.2 L338.2,203.3 L333.5,203.5 L333.5,247.5 L338.5,247.3 L338.5,259.3 L334.5,259.5 L330.5,259.6 L326.5,259.8 L322.5,260.0 L318.5,260.3 L318.5,248.3 L322.5,248.0 L322.5,204.0 L317.8,204.3 L313.0,204.6 L313.0,212.6 L307.0,213.1Z" fill="#6e5e14" fill-rule="evenodd" transform="translate(0.7,0.9)"/><path d="M307.0,193.0 L311.2,192.7 L315.4,192.4 L319.6,192.2 L323.8,192.0 L328.0,191.7 L332.2,191.6 L336.4,191.4 L340.6,191.3 L344.8,191.2 L349.0,191.1 L349.0,211.1 L343.0,211.2 L343.0,203.2 L338.2,203.3 L333.5,203.5 L333.5,247.5 L338.5,247.3 L338.5,259.3 L334.5,259.5 L330.5,259.6 L326.5,259.8 L322.5,260.0 L318.5,260.3 L318.5,248.3 L322.5,248.0 L322.5,204.0 L317.8,204.3 L313.0,204.6 L313.0,212.6 L307.0,213.1Z" fill="#dcc94a" fill-rule="evenodd" stroke="#9c8a26" stroke-width="0.6" stroke-opacity="0.8"/><path d="M307.0,193.0 L311.2,192.7 L315.4,192.4 L319.6,192.2 L323.8,192.0 L328.0,191.7 L332.2,191.6 L336.4,191.4 L340.6,191.3 L344.8,191.2 L349.0,191.1 L349.0,203.1 L344.8,203.2 L340.6,203.3 L336.4,203.4 L332.2,203.6 L328.0,203.7 L323.8,204.0 L319.6,204.2 L315.4,204.5 L311.2,204.7 L307.0,205.1Z" fill="url(#hz)" opacity="0.8"/><path d="M318.5,248.3 L322.5,248.0 L326.5,247.8 L330.5,247.6 L334.5,247.5 L338.5,247.3 L338.5,259.3 L334.5,259.5 L330.5,259.6 L326.5,259.8 L322.5,260.0 L318.5,260.3Z" fill="url(#hz)" opacity="0.8"/><path d="M356.0,191.0 L360.1,191.0 L364.3,191.0 L368.4,191.1 L372.6,191.1 L376.7,191.2 L380.9,191.3 L385.0,191.5 L389.5,196.6 L394.0,201.8 L394.0,217.8 L388.0,221.1 L393.0,230.8 L393.0,248.8 L389.0,254.1 L385.0,259.5 L380.9,259.3 L376.7,259.2 L372.6,259.1 L368.4,259.1 L364.3,259.0 L360.1,259.0 L356.0,259.0 L356.0,247.0 L359.0,247.0 L359.0,203.0 L356.0,203.0Z M370.0,203.6 L375.5,203.7 L381.0,203.8 L384.0,206.9 L384.0,215.4 L381.0,218.3 L375.5,218.2 L370.0,218.1Z M370.0,230.6 L375.0,230.7 L380.0,230.8 L383.0,234.4 L383.0,244.9 L380.0,247.8 L375.0,247.7 L370.0,247.6Z" fill="#6e5e14" fill-rule="evenodd" transform="translate(0.7,0.9)"/><path d="M356.0,191.0 L360.1,191.0 L364.3,191.0 L368.4,191.1 L372.6,191.1 L376.7,191.2 L380.9,191.3 L385.0,191.5 L389.5,196.6 L394.0,201.8 L394.0,217.8 L388.0,221.1 L393.0,230.8 L393.0,248.8 L389.0,254.1 L385.0,259.5 L380.9,259.3 L376.7,259.2 L372.6,259.1 L368.4,259.1 L364.3,259.0 L360.1,259.0 L356.0,259.0 L356.0,247.0 L359.0,247.0 L359.0,203.0 L356.0,203.0Z M370.0,203.6 L375.5,203.7 L381.0,203.8 L384.0,206.9 L384.0,215.4 L381.0,218.3 L375.5,218.2 L370.0,218.1Z M370.0,230.6 L375.0,230.7 L380.0,230.8 L383.0,234.4 L383.0,244.9 L380.0,247.8 L375.0,247.7 L370.0,247.6Z" fill="#dcc94a" fill-rule="evenodd" stroke="#9c8a26" stroke-width="0.6" stroke-opacity="0.8"/><path d="M356.0,191.0 L360.1,191.0 L364.3,191.0 L368.4,191.1 L372.6,191.1 L376.7,191.2 L380.9,191.3 L385.0,191.5 L385.0,204.0 L380.9,203.8 L376.7,203.7 L372.6,203.6 L368.4,203.6 L364.3,203.5 L360.1,203.5 L356.0,203.5Z" fill="url(#hz)" opacity="0.7"/><path d="M356.0,247.5 L360.1,247.5 L364.3,247.5 L368.4,247.6 L372.6,247.6 L376.7,247.7 L380.9,247.8 L385.0,248.0 L385.0,259.5 L380.9,259.3 L376.7,259.2 L372.6,259.1 L368.4,259.1 L364.3,259.0 L360.1,259.0 L356.0,259.0Z" fill="url(#hz)" opacity="0.7"/><path d="M370.0,218.1 L375.5,218.2 L381.0,218.3 L388.0,221.1 L393.0,230.8 L388.0,232.6 L383.0,234.4 L380.0,230.8 L375.0,230.7 L370.0,230.6Z" fill="url(#hz)" opacity="0.6"/><path d="M384.0,206.9 L389.0,204.4 L394.0,201.8 L394.0,217.8 L388.0,221.1 L381.0,218.3 L384.0,215.4Z" fill="url(#hz)" opacity="0.6"/><path d="M417.0,193.4 L421.5,193.8 L426.0,194.2 L430.5,194.6 L430.5,207.6 L435.2,230.2 L440.0,252.7 L446.0,253.5 L446.0,264.5 L441.6,263.9 L437.2,263.4 L432.9,262.9 L428.5,262.5 L428.5,251.5 L431.5,251.8 L430.0,241.1 L425.3,240.6 L420.7,240.2 L416.0,239.8 L414.5,249.2 L417.0,249.4 L417.0,261.4 L413.0,261.1 L409.0,260.8 L405.0,260.5 L401.0,260.2 L401.0,248.2 L404.5,248.5 L408.7,234.4 L412.8,220.4 L417.0,206.4Z M423.0,207.4 L429.3,233.0 L425.1,232.6 L420.9,232.2 L416.7,231.9Z" fill="#6e5e14" fill-rule="evenodd" transform="translate(0.7,0.9)"/><path d="M417.0,193.4 L421.5,193.8 L426.0,194.2 L430.5,194.6 L430.5,207.6 L435.2,230.2 L440.0,252.7 L446.0,253.5 L446.0,264.5 L441.6,263.9 L437.2,263.4 L432.9,262.9 L428.5,262.5 L428.5,251.5 L431.5,251.8 L430.0,241.1 L425.3,240.6 L420.7,240.2 L416.0,239.8 L414.5,249.2 L417.0,249.4 L417.0,261.4 L413.0,261.1 L409.0,260.8 L405.0,260.5 L401.0,260.2 L401.0,248.2 L404.5,248.5 L408.7,234.4 L412.8,220.4 L417.0,206.4Z M423.0,207.4 L429.3,233.0 L425.1,232.6 L420.9,232.2 L416.7,231.9Z" fill="#dcc94a" fill-rule="evenodd" stroke="#9c8a26" stroke-width="0.6" stroke-opacity="0.8"/><path d="M417.0,193.4 L421.5,193.8 L426.0,194.2 L430.5,194.6 L430.5,207.6 L426.0,207.2 L421.5,206.8 L417.0,206.4Z" fill="url(#hz)" opacity="0.7"/><path d="M401.0,248.2 L405.0,248.5 L409.0,248.8 L413.0,249.1 L417.0,249.4 L417.0,261.4 L413.0,261.1 L409.0,260.8 L405.0,260.5 L401.0,260.2Z" fill="url(#hz)" opacity="0.8"/><path d="M428.5,251.5 L432.9,251.9 L437.2,252.4 L441.6,252.9 L446.0,253.5 L446.0,264.5 L441.6,263.9 L437.2,263.4 L432.9,262.9 L428.5,262.5Z" fill="url(#hz)" opacity="0.8"/><path d="M208.0,223.9 L217.0,221.9" stroke="#e040b0" stroke-width="0.7" opacity="0.85"/><path d="M184.0,270.9 L196.0,267.9" stroke="#e040b0" stroke-width="0.7" opacity="0.85"/><path d="M195.5,240.3 L195.5,252.9" stroke="#e040b0" stroke-width="0.7" opacity="0.85"/><path d="M184.0,224.6 L196.0,221.6" stroke="#e040b0" stroke-width="0.7" opacity="0.85"/><path d="M249.5,211.4 L259.0,207.4" stroke="#e040b0" stroke-width="0.7" opacity="0.85"/><path d="M234.0,259.2 L225.0,263.5" stroke="#e040b0" stroke-width="0.7" opacity="0.85"/><path d="M292.0,205.9 L302.5,202.9" stroke="#e040b0" stroke-width="0.7" opacity="0.85"/><path d="M276.0,252.7 L266.5,256.0" stroke="#e040b0" stroke-width="0.7" opacity="0.85"/><path d="M322.5,248.0 L333.5,247.5" stroke="#e040b0" stroke-width="0.7" opacity="0.85"/><path d="M343.0,203.2 L349.0,203.1" stroke="#e040b0" stroke-width="0.7" opacity="0.85"/><path d="M307.0,205.1 L313.0,204.6" stroke="#e040b0" stroke-width="0.7" opacity="0.85"/><path d="M359.0,247.5 L370.0,247.6" stroke="#e040b0" stroke-width="0.7" opacity="0.85"/><path d="M388.0,221.1 L393.0,230.8" stroke="#e040b0" stroke-width="0.7" opacity="0.85"/><path d="M417.0,206.4 L430.5,207.6" stroke="#e040b0" stroke-width="0.7" opacity="0.85"/><path d="M404.5,248.5 L417.0,249.4" stroke="#e040b0" stroke-width="0.7" opacity="0.85"/><path d="M428.5,251.5 L440.0,252.7" stroke="#e040b0" stroke-width="0.7" opacity="0.85"/></svg></div><div class="a" style="left:444px;top:72px;width:150px;height:249px;background:#ebebeb;border:1px solid #d0d0d0;box-shadow:1px 1px 2px rgba(0,0,0,0.15)"></div><div class="a" style="left:445px;top:73px;width:148px;height:10px;background:#d9d9d9"></div><div class="t" style="left:446.50px;top:75.01px;font-size:6.6px;color:#333;transform:scaleX(0.926);transform-origin:0 0;">Lettering Art Gallery</div><svg style="left:584px;top:73px;" width="9" height="9" viewBox="0 0 9 9"><path d="M1.5 1.5l6 6M7.5 1.5l-6 6" stroke="#111" stroke-width="1.5"/></svg><div class="a" style="left:583.5px;top:83px;width:9.5px;height:236px;background:#fff;border-left:1px solid #e0e0e0"></div><svg style="left:584px;top:84px;" width="9" height="9" viewBox="0 0 9 9"><path d="M2 6l2.5-2.5L7 6z" fill="#777"/></svg><svg style="left:584px;top:308px;" width="9" height="9" viewBox="0 0 9 9"><path d="M2 3l2.5 2.5L7 3z" fill="#777"/></svg><div class="a" style="left:447.5px;top:84.5px;width:27.5px;height:27.5px;background:#efefef;border:1px solid #dadada"></div><svg style="left:448.5px;top:85.5px;" width="26" height="26" viewBox="0 0 26 26"><path d="M2.5,18.8 L4.5,4.8 L8.0,2.5 L10.1,24.2 L7.5,23.2 L7.0,18.2 L5.5,17.7 L5.1,21.7Z M5.8,14.1 L6.3,8.4 L6.8,14.2Z M9.6,2.0 L14.9,1.6 L16.4,4.6 L16.4,10.8 L15.8,13.0 L16.4,15.2 L16.4,21.4 L14.9,24.4 L9.6,24.0Z M12.5,5.6 L13.7,5.7 L13.7,10.7 L12.5,10.7Z M12.5,15.3 L13.8,15.3 L13.8,20.3 L12.5,20.4Z M18.3,2.6 L23.2,6.7 L23.5,8.4 L23.5,11.4 L21.3,10.7 L21.3,8.3 L19.6,7.6 L19.6,18.4 L21.3,17.7 L21.3,15.3 L23.5,14.6 L23.5,17.6 L23.2,19.3 L18.3,23.4 L16.8,20.0 L16.8,6.0Z" fill="#3e9db2" fill-rule="evenodd"/></svg><div class="t" style="left:459.47px;top:114.08px;font-size:6.4px;color:#333;">1</div><div class="a" style="left:476.8px;top:84.5px;width:27.5px;height:27.5px;background:#efefef;border:1px solid #dadada"></div><svg style="left:477.8px;top:85.5px;" width="26" height="26" viewBox="0 0 26 26"><path d="M2.0,19.0 L4.1,7.8 L7.8,6.1 L9.9,15.4 L7.2,16.3 L6.8,14.1 L5.2,14.9 L4.7,17.5Z M5.4,12.7 L6.0,9.5 L6.5,12.2Z M9.5,5.5 L15.0,5.2 L16.5,6.7 L16.5,9.5 L16.0,10.4 L16.5,11.5 L16.5,14.3 L15.0,15.2 L9.5,15.5Z M12.4,6.8 L13.7,6.8 L13.7,9.0 L12.4,9.0Z M12.4,11.0 L13.8,11.0 L13.8,13.2 L12.4,13.2Z M18.5,6.2 L23.6,8.8 L24.0,10.0 L24.0,12.6 L21.7,11.3 L21.7,9.9 L19.9,9.0 L19.9,14.6 L21.7,15.5 L21.7,14.1 L24.0,15.4 L24.0,18.0 L23.6,18.8 L18.5,16.2 L17.0,13.8 L17.0,7.4Z" fill="#3e9db2" fill-rule="evenodd"/></svg><div class="t" style="left:488.77px;top:114.08px;font-size:6.4px;color:#333;">2</div><div class="a" style="left:506.1px;top:84.5px;width:27.5px;height:27.5px;background:#efefef;border:1px solid #dadada"></div><svg style="left:507.1px;top:85.5px;" width="26" height="26" viewBox="0 0 26 26"><path d="M2.0,20.0 L4.1,8.2 L7.8,9.9 L9.9,19.1 L7.2,19.3 L6.8,17.0 L5.2,17.0 L4.7,19.6Z M5.4,14.8 L6.0,11.8 L6.5,15.0Z M9.5,10.5 L15.0,10.8 L16.5,11.5 L16.5,14.0 L16.0,14.9 L16.5,15.7 L16.5,18.1 L15.0,19.0 L9.5,19.1Z M12.4,12.4 L13.7,12.4 L13.7,14.2 L12.4,14.2Z M12.4,15.8 L13.8,15.8 L13.8,17.6 L12.4,17.6Z M18.5,9.8 L23.6,7.2 L24.0,8.3 L24.0,11.7 L21.7,12.4 L21.7,10.8 L19.9,11.5 L19.9,17.2 L21.7,17.2 L21.7,15.6 L24.0,15.3 L24.0,18.7 L23.6,19.9 L18.5,19.3 L17.0,17.6 L17.0,12.0Z" fill="#3e9db2" fill-rule="evenodd"/></svg><div class="t" style="left:518.07px;top:114.08px;font-size:6.4px;color:#333;">3</div><div class="a" style="left:535.4px;top:84.5px;width:27.5px;height:27.5px;background:#efefef;border:1px solid #dadada"></div><svg style="left:536.4px;top:85.5px;" width="26" height="26" viewBox="0 0 26 26"><path d="M2.0,19.0 L4.1,7.9 L7.8,9.2 L9.9,16.3 L7.2,17.0 L6.8,15.1 L5.2,15.4 L4.7,17.9Z M5.4,13.6 L6.0,10.9 L6.5,13.5Z M9.5,9.6 L15.0,9.9 L16.5,10.4 L16.5,12.3 L16.0,13.0 L16.5,13.7 L16.5,15.6 L15.0,16.1 L9.5,16.4Z M12.4,11.1 L13.7,11.1 L13.7,12.4 L12.4,12.4Z M12.4,13.6 L13.8,13.6 L13.8,14.9 L12.4,14.9Z M18.5,9.1 L23.6,7.2 L24.0,8.2 L24.0,11.3 L21.7,11.6 L21.7,10.2 L19.9,10.6 L19.9,15.4 L21.7,15.8 L21.7,14.4 L24.0,14.7 L24.0,17.8 L23.6,18.8 L18.5,16.9 L17.0,15.2 L17.0,10.8Z" fill="#3e9db2" fill-rule="evenodd"/></svg><div class="t" style="left:547.37px;top:114.08px;font-size:6.4px;color:#333;">4</div><div class="a" style="left:447.5px;top:124.1px;width:27.5px;height:27.5px;background:#efefef;border:1px solid #dadada"></div><svg style="left:448.5px;top:125.1px;" width="26" height="26" viewBox="0 0 26 26"><path d="M2.0,19.0 L4.1,7.0 L7.8,7.0 L9.9,20.8 L7.2,20.4 L6.8,17.1 L5.2,16.8 L4.7,19.8Z M5.4,14.2 L6.0,10.4 L6.5,14.4Z M9.5,7.0 L15.0,7.0 L16.5,8.7 L16.5,12.5 L16.0,13.9 L16.5,15.3 L16.5,19.1 L15.0,20.9 L9.5,20.8Z M12.4,9.5 L13.7,9.5 L13.7,12.6 L12.4,12.6Z M12.4,15.4 L13.8,15.4 L13.8,18.5 L12.4,18.5Z M18.5,7.0 L23.6,7.0 L24.0,8.2 L24.0,11.3 L21.7,11.5 L21.7,9.8 L19.9,9.9 L19.9,17.2 L21.7,16.9 L21.7,15.1 L24.0,14.7 L24.0,17.8 L23.6,19.1 L18.5,20.4 L17.0,18.2 L17.0,9.5Z" fill="#3e9db2" fill-rule="evenodd"/></svg><div class="t" style="left:459.47px;top:153.68px;font-size:6.4px;color:#333;">5</div><div class="a" style="left:476.8px;top:124.1px;width:27.5px;height:27.5px;background:#efefef;border:1px solid #dadada"></div><svg style="left:477.8px;top:125.1px;" width="26" height="26" viewBox="0 0 26 26"><path d="M2.0,18.0 L4.1,8.4 L7.8,7.5 L9.9,16.2 L7.2,16.6 L6.8,14.6 L5.2,15.0 L4.7,17.2Z M5.4,13.1 L6.0,10.3 L6.5,12.8Z M9.5,7.2 L15.0,7.1 L16.5,8.3 L16.5,10.8 L16.0,11.7 L16.5,12.6 L16.5,15.2 L15.0,16.1 L9.5,16.2Z M12.4,8.6 L13.7,8.6 L13.7,10.6 L12.4,10.6Z M12.4,12.4 L13.8,12.4 L13.8,14.4 L12.4,14.4Z M18.5,7.6 L23.6,8.9 L24.0,9.9 L24.0,12.2 L21.7,11.6 L21.7,10.3 L19.9,9.9 L19.9,14.9 L21.7,15.4 L21.7,14.1 L24.0,14.8 L24.0,17.1 L23.6,17.9 L18.5,16.6 L17.0,14.7 L17.0,8.9Z" fill="#3e9db2" fill-rule="evenodd"/></svg><div class="t" style="left:488.77px;top:153.68px;font-size:6.4px;color:#333;">6</div><div class="a" style="left:506.1px;top:124.1px;width:27.5px;height:27.5px;background:#efefef;border:1px solid #dadada"></div><svg style="left:507.1px;top:125.1px;" width="26" height="26" viewBox="0 0 26 26"><path d="M2.0,18.0 L4.1,6.0 L7.8,6.0 L9.9,20.7 L7.2,20.0 L6.8,16.6 L5.2,16.1 L4.7,19.1Z M5.4,13.5 L6.0,9.5 L6.5,13.7Z M9.5,6.0 L15.0,6.0 L16.5,7.8 L16.5,11.9 L16.0,13.4 L16.5,14.8 L16.5,18.9 L15.0,20.9 L9.5,20.6Z M12.4,8.7 L13.7,8.7 L13.7,12.0 L12.4,12.0Z M12.4,15.0 L13.8,15.0 L13.8,18.3 L12.4,18.3Z M18.5,6.0 L23.6,6.0 L24.0,7.2 L24.0,10.3 L21.7,10.7 L21.7,8.8 L19.9,9.0 L19.9,16.6 L21.7,16.1 L21.7,14.3 L24.0,13.7 L24.0,16.8 L23.6,18.2 L18.5,20.1 L17.0,17.9 L17.0,8.6Z" fill="#3e9db2" fill-rule="evenodd"/></svg><div class="t" style="left:518.07px;top:153.68px;font-size:6.4px;color:#333;">7</div><div class="a" style="left:534.4px;top:123.1px;width:29.5px;height:40px;border:1px solid #f5d590"></div><div class="a" style="left:535.4px;top:124.1px;width:27.5px;height:27.5px;background:#efefef;border:1px solid #dadada"></div><svg style="left:536.4px;top:125.1px;" width="26" height="26" viewBox="0 0 26 26"><path d="M2.0,18.0 L4.1,7.9 L7.8,9.2 L9.9,18.0 L7.2,18.0 L6.8,15.8 L5.2,15.7 L4.7,18.0Z M5.4,13.8 L6.0,11.0 L6.5,14.0Z M9.5,9.6 L15.0,9.9 L16.5,10.6 L16.5,13.0 L16.0,13.9 L16.5,14.7 L16.5,17.0 L15.0,18.0 L9.5,18.0Z M12.4,11.4 L13.7,11.4 L13.7,13.2 L12.4,13.2Z M12.4,14.8 L13.8,14.8 L13.8,16.6 L12.4,16.6Z M18.5,9.1 L23.6,7.2 L24.0,8.1 L24.0,11.0 L21.7,11.6 L21.7,10.2 L19.9,10.7 L19.9,15.9 L21.7,15.8 L21.7,14.4 L24.0,14.0 L24.0,16.9 L23.6,18.0 L18.5,18.0 L17.0,16.5 L17.0,11.1Z" fill="#3e9db2" fill-rule="evenodd"/></svg><div class="t" style="left:547.37px;top:153.68px;font-size:6.4px;color:#333;">8</div><div class="a" style="left:447.5px;top:163.7px;width:27.5px;height:27.5px;background:#efefef;border:1px solid #dadada"></div><svg style="left:448.5px;top:164.7px;" width="26" height="26" viewBox="0 0 26 26"><path d="M2.5,17.0 L4.5,6.9 L8.0,3.9 L10.1,23.3 L7.5,21.8 L7.0,17.4 L5.5,16.7 L5.1,19.6Z M5.8,13.9 L6.3,9.3 L6.8,14.0Z M9.6,2.9 L14.9,2.3 L16.4,5.3 L16.4,11.0 L15.8,13.0 L16.4,15.0 L16.4,20.7 L14.9,23.7 L9.6,23.1Z M12.5,6.0 L13.7,6.0 L13.7,10.8 L12.5,10.8Z M12.5,15.2 L13.8,15.2 L13.8,20.0 L12.5,20.0Z M18.3,4.1 L23.2,8.6 L23.5,9.8 L23.5,11.9 L21.3,11.3 L21.3,9.5 L19.6,8.6 L19.6,17.4 L21.3,16.5 L21.3,14.7 L23.5,14.1 L23.5,16.2 L23.2,17.4 L18.3,21.9 L16.8,19.3 L16.8,6.7Z" fill="#3e9db2" fill-rule="evenodd"/></svg><div class="t" style="left:459.47px;top:193.28px;font-size:6.4px;color:#333;">9</div><div class="a" style="left:476.8px;top:163.7px;width:27.5px;height:27.5px;background:#efefef;border:1px solid #dadada"></div><svg style="left:477.8px;top:164.7px;" width="26" height="26" viewBox="0 0 26 26"><path d="M2.0,19.0 L4.1,7.4 L7.8,6.5 L9.9,19.9 L7.2,19.7 L6.8,16.5 L5.2,16.5 L4.7,19.4Z M5.4,14.0 L6.0,10.2 L6.5,14.0Z M9.5,6.2 L15.0,6.1 L16.5,7.9 L16.5,11.7 L16.0,13.0 L16.5,14.4 L16.5,18.2 L15.0,20.0 L9.5,19.9Z M12.4,8.5 L13.7,8.5 L13.7,11.6 L12.4,11.6Z M12.4,14.4 L13.8,14.4 L13.8,17.5 L12.4,17.5Z M18.5,6.6 L23.6,7.9 L24.0,9.1 L24.0,12.0 L21.7,11.7 L21.7,10.0 L19.9,9.7 L19.9,16.8 L21.7,16.7 L21.7,15.0 L24.0,15.0 L24.0,17.9 L23.6,19.1 L18.5,19.7 L17.0,17.4 L17.0,8.7Z" fill="#3e9db2" fill-rule="evenodd"/></svg><div class="t" style="left:486.99px;top:193.28px;font-size:6.4px;color:#333;">10</div><div class="a" style="left:506.1px;top:163.7px;width:27.5px;height:27.5px;background:#efefef;border:1px solid #dadada"></div><svg style="left:507.1px;top:164.7px;" width="26" height="26" viewBox="0 0 26 26"><path d="M2.0,20.0 L4.1,6.9 L7.8,8.2 L9.9,20.0 L7.2,20.0 L6.8,17.1 L5.2,17.0 L4.7,20.0Z M5.4,14.5 L6.0,10.8 L6.5,14.6Z M9.5,8.6 L15.0,8.9 L16.5,10.0 L16.5,13.2 L16.0,14.4 L16.5,15.5 L16.5,18.6 L15.0,20.0 L9.5,20.0Z M12.4,11.0 L13.7,11.0 L13.7,13.4 L12.4,13.4Z M12.4,15.6 L13.8,15.6 L13.8,18.0 L12.4,18.0Z M18.5,8.1 L23.6,6.2 L24.0,7.4 L24.0,11.0 L21.7,11.6 L21.7,9.8 L19.9,10.4 L19.9,17.3 L21.7,17.1 L21.7,15.3 L24.0,15.0 L24.0,18.6 L23.6,20.0 L18.5,20.0 L17.0,17.9 L17.0,10.6Z" fill="#3e9db2" fill-rule="evenodd"/></svg><div class="t" style="left:516.53px;top:193.28px;font-size:6.4px;color:#333;">11</div><div class="a" style="left:535.4px;top:163.7px;width:27.5px;height:27.5px;background:#efefef;border:1px solid #dadada"></div><svg style="left:536.4px;top:164.7px;" width="26" height="26" viewBox="0 0 26 26"><path d="M2.0,19.0 L4.1,7.7 L7.8,8.6 L9.9,17.0 L7.2,17.5 L6.8,15.4 L5.2,15.6 L4.7,18.2Z M5.4,13.6 L6.0,10.7 L6.5,13.6Z M9.5,8.9 L15.0,9.1 L16.5,9.9 L16.5,12.2 L16.0,13.0 L16.5,13.8 L16.5,16.1 L15.0,16.9 L9.5,17.1Z M12.4,10.6 L13.7,10.6 L13.7,12.2 L12.4,12.2Z M12.4,13.8 L13.8,13.8 L13.8,15.4 L12.4,15.4Z M18.5,8.6 L23.6,7.1 L24.0,8.2 L24.0,11.3 L21.7,11.5 L21.7,10.0 L19.9,10.3 L19.9,15.7 L21.7,16.0 L21.7,14.5 L24.0,14.7 L24.0,17.8 L23.6,18.9 L18.5,17.4 L17.0,15.7 L17.0,10.3Z" fill="#3e9db2" fill-rule="evenodd"/></svg><div class="t" style="left:545.59px;top:193.28px;font-size:6.4px;color:#333;">12</div><div class="a" style="left:447.5px;top:203.3px;width:27.5px;height:27.5px;background:#efefef;border:1px solid #dadada"></div><svg style="left:448.5px;top:204.3px;" width="26" height="26" viewBox="0 0 26 26"><path d="M2.0,20.0 L4.1,9.5 L7.8,7.3 L9.9,20.0 L7.2,20.0 L6.8,17.1 L5.2,17.3 L4.7,20.0Z M5.4,15.0 L6.0,11.4 L6.5,14.7Z M9.5,6.6 L15.0,6.2 L16.5,8.2 L16.5,12.0 L16.0,13.2 L16.5,14.6 L16.5,18.4 L15.0,20.0 L9.5,20.0Z M12.4,8.5 L13.7,8.5 L13.7,11.6 L12.4,11.6Z M12.4,14.4 L13.8,14.4 L13.8,17.5 L12.4,17.5Z M18.5,7.5 L23.6,10.7 L24.0,11.9 L24.0,14.2 L21.7,13.2 L21.7,11.7 L19.9,10.8 L19.9,17.4 L21.7,17.7 L21.7,16.2 L24.0,16.8 L24.0,19.1 L23.6,20.0 L18.5,20.0 L17.0,17.6 L17.0,9.2Z" fill="#3e9db2" fill-rule="evenodd"/></svg><div class="t" style="left:457.69px;top:232.88px;font-size:6.4px;color:#333;">13</div><div class="a" style="left:476.8px;top:203.3px;width:27.5px;height:27.5px;background:#efefef;border:1px solid #dadada"></div><svg style="left:477.8px;top:204.3px;" width="26" height="26" viewBox="0 0 26 26"><path d="M2.0,18.0 L4.1,8.0 L7.8,8.0 L9.9,18.0 L7.2,18.0 L6.8,15.6 L5.2,15.6 L4.7,18.0Z M5.4,13.6 L6.0,10.6 L6.5,13.6Z M9.5,8.0 L15.0,8.0 L16.5,9.2 L16.5,12.0 L16.0,13.0 L16.5,14.0 L16.5,16.8 L15.0,18.0 L9.5,18.0Z M12.4,9.8 L13.7,9.8 L13.7,12.0 L12.4,12.0Z M12.4,14.0 L13.8,14.0 L13.8,16.2 L12.4,16.2Z M18.5,8.0 L23.6,8.0 L24.0,9.0 L24.0,11.6 L21.7,11.6 L21.7,10.2 L19.9,10.2 L19.9,15.8 L21.7,15.8 L21.7,14.4 L24.0,14.4 L24.0,17.0 L23.6,18.0 L18.5,18.0 L17.0,16.2 L17.0,9.8Z" fill="#3e9db2" fill-rule="evenodd"/></svg><div class="t" style="left:486.99px;top:232.88px;font-size:6.4px;color:#333;">14</div><div class="a" style="left:506.1px;top:203.3px;width:27.5px;height:27.5px;background:#efefef;border:1px solid #dadada"></div><svg style="left:507.1px;top:204.3px;" width="26" height="26" viewBox="0 0 26 26"><path d="M2.0,17.0 L4.1,6.0 L7.8,6.0 L9.9,21.5 L7.2,20.4 L6.8,16.7 L5.2,16.0 L4.7,18.9Z M5.4,13.5 L6.0,9.6 L6.5,13.8Z M9.5,6.0 L15.0,6.0 L16.5,7.8 L16.5,12.2 L16.0,13.8 L16.5,15.2 L16.5,19.5 L15.0,21.8 L9.5,21.4Z M12.4,8.9 L13.7,8.9 L13.7,12.4 L12.4,12.4Z M12.4,15.6 L13.8,15.6 L13.8,19.1 L12.4,19.1Z M18.5,6.0 L23.6,6.0 L24.0,7.1 L24.0,10.0 L21.7,10.5 L21.7,8.8 L19.9,9.0 L19.9,16.7 L21.7,15.8 L21.7,14.1 L24.0,13.0 L24.0,15.9 L23.6,17.3 L18.5,20.5 L17.0,18.5 L17.0,8.7Z" fill="#3e9db2" fill-rule="evenodd"/></svg><div class="t" style="left:516.29px;top:232.88px;font-size:6.4px;color:#333;">15</div><div class="a" style="left:535.4px;top:203.3px;width:27.5px;height:27.5px;background:#efefef;border:1px solid #dadada"></div><svg style="left:536.4px;top:204.3px;" width="26" height="26" viewBox="0 0 26 26"><path d="M2.0,19.0 L4.1,7.9 L7.8,9.2 L9.9,17.2 L7.2,17.6 L6.8,15.6 L5.2,15.8 L4.7,18.2Z M5.4,13.8 L6.0,11.0 L6.5,13.8Z M9.5,9.6 L15.0,9.9 L16.5,10.5 L16.5,12.7 L16.0,13.5 L16.5,14.2 L16.5,16.3 L15.0,17.1 L9.5,17.2Z M12.4,11.3 L13.7,11.2 L13.7,12.8 L12.4,12.8Z M12.4,14.2 L13.8,14.2 L13.8,15.7 L12.4,15.7Z M18.5,9.1 L23.6,7.2 L24.0,8.2 L24.0,11.3 L21.7,11.7 L21.7,10.2 L19.9,10.7 L19.9,15.9 L21.7,16.1 L21.7,14.6 L24.0,14.7 L24.0,17.8 L23.6,18.9 L18.5,17.6 L17.0,15.9 L17.0,10.9Z" fill="#3e9db2" fill-rule="evenodd"/></svg><div class="t" style="left:545.59px;top:232.88px;font-size:6.4px;color:#333;">16</div><div class="a" style="left:447.5px;top:242.9px;width:27.5px;height:27.5px;background:#efefef;border:1px solid #dadada"></div><svg style="left:448.5px;top:243.9px;" width="26" height="26" viewBox="0 0 26 26"><path d="M2.0,19.0 L4.1,7.0 L7.8,7.0 L9.9,19.0 L7.2,19.0 L6.8,16.1 L5.2,16.1 L4.7,19.0Z M5.4,13.7 L6.0,10.1 L6.5,13.7Z M9.5,7.0 L15.0,7.0 L16.5,8.4 L16.5,11.8 L16.0,13.0 L16.5,14.2 L16.5,17.6 L15.0,19.0 L9.5,19.0Z M12.4,9.2 L13.7,9.2 L13.7,11.8 L12.4,11.8Z M12.4,14.2 L13.8,14.2 L13.8,16.8 L12.4,16.8Z M18.5,7.0 L23.6,7.0 L24.0,8.2 L24.0,11.3 L21.7,11.3 L21.7,9.6 L19.9,9.6 L19.9,16.4 L21.7,16.4 L21.7,14.7 L24.0,14.7 L24.0,17.8 L23.6,19.0 L18.5,19.0 L17.0,16.8 L17.0,9.2Z" fill="#3e9db2" fill-rule="evenodd"/></svg><div class="t" style="left:457.69px;top:272.48px;font-size:6.4px;color:#333;">17</div><div class="a" style="left:476.8px;top:242.9px;width:27.5px;height:27.5px;background:#efefef;border:1px solid #dadada"></div><svg style="left:477.8px;top:243.9px;" width="26" height="26" viewBox="0 0 26 26"><path d="M2.0,19.0 L4.1,6.7 L7.8,6.3 L9.9,19.9 L7.2,19.7 L6.8,16.4 L5.2,16.3 L4.7,19.4Z M5.4,13.8 L6.0,9.9 L6.5,13.8Z M9.5,6.1 L15.0,6.0 L16.5,7.8 L16.5,11.6 L16.0,13.0 L16.5,14.4 L16.5,18.2 L15.0,20.0 L9.5,19.9Z M12.4,8.5 L13.7,8.5 L13.7,11.6 L12.4,11.6Z M12.4,14.4 L13.8,14.4 L13.8,17.5 L12.4,17.5Z M18.5,6.3 L23.6,6.9 L24.0,8.2 L24.0,11.3 L21.7,11.2 L21.7,9.5 L19.9,9.3 L19.9,16.7 L21.7,16.5 L21.7,14.8 L24.0,14.7 L24.0,17.8 L23.6,19.1 L18.5,19.7 L17.0,17.4 L17.0,8.6Z" fill="#3e9db2" fill-rule="evenodd"/></svg><div class="t" style="left:486.99px;top:272.48px;font-size:6.4px;color:#333;">18</div><div class="a" style="left:506.1px;top:242.9px;width:27.5px;height:27.5px;background:#efefef;border:1px solid #dadada"></div><svg style="left:507.1px;top:243.9px;" width="26" height="26" viewBox="0 0 26 26"><path d="M2.0,19.0 L4.1,7.3 L7.8,7.7 L9.9,19.0 L7.2,19.0 L6.8,16.3 L5.2,16.2 L4.7,19.0Z M5.4,13.9 L6.0,10.5 L6.5,14.0Z M9.5,7.9 L15.0,8.0 L16.5,9.2 L16.5,12.3 L16.0,13.5 L16.5,14.6 L16.5,17.7 L15.0,19.0 L9.5,19.0Z M12.4,10.0 L13.7,10.0 L13.7,12.4 L12.4,12.4Z M12.4,14.6 L13.8,14.6 L13.8,17.0 L12.4,17.0Z M18.5,7.7 L23.6,7.1 L24.0,8.2 L24.0,11.3 L21.7,11.5 L21.7,9.9 L19.9,10.1 L19.9,16.5 L21.7,16.4 L21.7,14.8 L24.0,14.7 L24.0,17.8 L23.6,19.0 L18.5,19.0 L17.0,17.0 L17.0,9.9Z" fill="#3e9db2" fill-rule="evenodd"/></svg><div class="t" style="left:516.29px;top:272.48px;font-size:6.4px;color:#333;">19</div><div class="a" style="left:535.4px;top:242.9px;width:27.5px;height:27.5px;background:#efefef;border:1px solid #dadada"></div><svg style="left:536.4px;top:243.9px;" width="26" height="26" viewBox="0 0 26 26"><path d="M2.0,19.0 L4.1,7.8 L7.8,7.5 L9.9,18.6 L7.2,18.8 L6.8,16.1 L5.2,16.2 L4.7,18.9Z M5.4,13.9 L6.0,10.5 L6.5,13.9Z M9.5,7.3 L15.0,6.8 L16.5,8.1 L16.5,11.3 L16.0,12.5 L16.5,13.7 L16.5,16.9 L15.0,18.4 L9.5,18.7Z M12.4,9.1 L13.7,9.0 L13.7,11.5 L12.4,11.6Z M12.4,13.9 L13.8,13.8 L13.8,16.4 L12.4,16.5Z M18.5,6.5 L23.6,6.0 L24.0,7.2 L24.0,10.3 L21.7,10.5 L21.7,8.8 L19.9,9.0 L19.9,15.6 L21.7,15.5 L21.7,13.8 L24.0,13.7 L24.0,16.8 L23.6,18.0 L18.5,18.2 L17.0,16.2 L17.0,8.7Z" fill="#3e9db2" fill-rule="evenodd"/></svg><div class="t" style="left:545.59px;top:272.48px;font-size:6.4px;color:#333;">20</div><div class="a" style="left:447.5px;top:282.5px;width:27.5px;height:27.5px;background:#efefef;border:1px solid #dadada"></div><svg style="left:448.5px;top:283.5px;" width="26" height="26" viewBox="0 0 26 26"><path d="M2.0,19.0 L4.1,7.0 L7.8,7.0 L9.9,19.0 L7.2,19.0 L6.8,16.1 L5.2,16.1 L4.7,19.0Z M5.4,13.7 L6.0,10.1 L6.5,13.7Z M9.5,7.0 L15.0,7.0 L16.5,8.4 L16.5,11.8 L16.0,13.0 L16.5,14.2 L16.5,17.6 L15.0,19.0 L9.5,19.0Z M12.4,9.2 L13.7,9.2 L13.7,11.8 L12.4,11.8Z M12.4,14.2 L13.8,14.2 L13.8,16.8 L12.4,16.8Z M18.5,7.0 L23.6,7.0 L24.0,8.2 L24.0,11.3 L21.7,11.3 L21.7,9.6 L19.9,9.6 L19.9,16.4 L21.7,16.4 L21.7,14.7 L24.0,14.7 L24.0,17.8 L23.6,19.0 L18.5,19.0 L17.0,16.8 L17.0,9.2Z" fill="#3e9db2" fill-rule="evenodd"/></svg><div class="t" style="left:457.69px;top:312.08px;font-size:6.4px;color:#333;">21</div><div class="a" style="left:476.8px;top:282.5px;width:27.5px;height:27.5px;background:#efefef;border:1px solid #dadada"></div><svg style="left:477.8px;top:283.5px;" width="26" height="26" viewBox="0 0 26 26"><path d="M2.0,18.0 L4.1,8.6 L7.8,7.9 L9.9,18.7 L7.2,18.5 L6.8,16.0 L5.2,15.9 L4.7,18.2Z M5.4,13.9 L6.0,10.9 L6.5,13.9Z M9.5,7.6 L15.0,6.6 L16.5,7.9 L16.5,11.5 L16.0,12.9 L16.5,14.1 L16.5,17.8 L15.0,19.2 L9.5,18.7Z M12.4,9.2 L13.7,9.1 L13.7,11.7 L12.4,11.8Z M12.4,14.2 L13.8,14.2 L13.8,16.9 L12.4,16.8Z M18.5,6.0 L23.6,5.1 L24.0,6.5 L24.0,10.4 L21.7,10.6 L21.7,8.6 L19.9,8.8 L19.9,16.6 L21.7,16.6 L21.7,14.6 L24.0,14.6 L24.0,18.5 L23.6,20.0 L18.5,19.5 L17.0,17.0 L17.0,8.6Z" fill="#3e9db2" fill-rule="evenodd"/></svg><div class="t" style="left:486.99px;top:312.08px;font-size:6.4px;color:#333;">22</div><div class="a" style="left:615.7px;top:79.5px;width:152.3px;height:13px;background:#d2d2d2"></div><div class="t" style="left:618.60px;top:83.04px;font-size:6.8px;color:#222;font-weight:bold;transform:scaleX(0.857);transform-origin:0 0;">Object Properties</div><svg style="left:750px;top:81px;" width="8" height="9" viewBox="0 0 8 9"><path d="M2.5 1h3M3 1v4M5 1v4M1.5 5h5M4 5v3.5" stroke="#222" stroke-width="0.9" fill="none"/></svg><svg style="left:758px;top:81px;" width="9" height="9" viewBox="0 0 9 9"><path d="M2 2.2l5 5M7 2.2l-5 5" stroke="#111" stroke-width="1.3"/></svg><div class="a" style="left:615.7px;top:92.5px;width:152.3px;height:254.5px;background:#ececec"></div><div class="a" style="left:621.5px;top:96.5px;width:139.5px;height:9px;background:#ebebeb;border:1px solid #d8d8d8;border-bottom:none"></div><div class="a" style="left:621.5px;top:105.5px;width:139.5px;height:8.5px;background:#ebebeb;border-left:1px solid #d8d8d8;border-right:1px solid #d8d8d8"></div><div class="a" style="left:621.5px;top:114px;width:139.5px;height:8.8px;background:#ebebeb;border-left:1px solid #d8d8d8;border-right:1px solid #d8d8d8"></div><div class="a" style="left:760px;top:96.5px;width:1.5px;height:26px;background:#cfcfcf"></div><div class="a" style="left:669px;top:97.5px;width:1px;height:7.5px;background:#c4c4c4"></div><div class="a" style="left:715px;top:97.5px;width:1px;height:7.5px;background:#c4c4c4"></div><div class="a" style="left:687.8px;top:106.3px;width:1px;height:7px;background:#c4c4c4"></div><div class="a" style="left:670.7px;top:115px;width:1px;height:7px;background:#c4c4c4"></div><div class="a" style="left:709.8px;top:115px;width:1px;height:7px;background:#c4c4c4"></div><svg style="left:627.5px;top:99.3px;" width="7" height="6" viewBox="0 0 7 6"><path d="M0.5 1h6M0.5 3h6M0.5 5h6" stroke="#555" stroke-width="0.8" stroke-dasharray="1 0.5"/></svg><div class="t" style="left:634.70px;top:98.84px;font-size:6.8px;color:#333;transform:scaleX(0.886);transform-origin:0 0;">Pull Comp</div><svg style="left:675.5px;top:98.3px;" width="7" height="7" viewBox="0 0 7 7"><path d="M1 6L6 1" stroke="#444" stroke-width="1.2"/></svg><div class="t" style="left:683.00px;top:98.84px;font-size:6.8px;color:#333;transform:scaleX(0.875);transform-origin:0 0;">Bling Run</div><svg style="left:721.5px;top:98.6px;" width="7" height="7" viewBox="0 0 7 7"><path d="M2 1v5M5 1v5M0.5 2.5h6M0.5 4.5h6" stroke="#555" stroke-width="0.8"/></svg><div class="t" style="left:729.00px;top:98.84px;font-size:6.8px;color:#333;transform:scaleX(0.894);transform-origin:0 0;">Bling Fills</div><svg style="left:638.5px;top:107.6px;" width="7" height="6" viewBox="0 0 7 6"><path d="M0.5 1l1 4 1-4 1 4 1-4 1 4" stroke="#555" stroke-width="0.6" fill="none"/><path d="M0 5.5h7" stroke="#555" stroke-width="0.5"/></svg><div class="t" style="left:646.60px;top:107.24px;font-size:6.8px;color:#333;transform:scaleX(0.871);transform-origin:0 0;">Underlay</div><svg style="left:706px;top:107.3px;" width="7" height="7" viewBox="0 0 7 7"><path d="M1 1l1 1M3 3l1 1M5 5l1.5 1.5" stroke="#444" stroke-width="1"/></svg><div class="t" style="left:713.50px;top:107.24px;font-size:6.8px;color:#333;transform:scaleX(0.857);transform-origin:0 0;">Connectors</div><div class="a" style="left:621px;top:113.8px;width:49.5px;height:9px;background:#fde7b0"></div><svg style="left:631px;top:115.8px;" width="7" height="7" viewBox="0 0 7 7"><path d="M3.5 0.5l.9 2.1 2.3.3-1.7 1.5.5 2.3L3.5 5.5 1.5 6.7 2 4.4.3 2.9l2.3-.3z" fill="none" stroke="#333" stroke-width="0.6"/></svg><div class="t" style="left:639.30px;top:115.24px;font-size:6.8px;color:#333;transform:scaleX(0.838);transform-origin:0 0;">Special</div><svg style="left:680.5px;top:115.8px;" width="7" height="7" viewBox="0 0 7 7"><path d="M1 3.5l2.5-2.5 2.5 2.5-2.5 2.5z" fill="none" stroke="#555" stroke-width="0.6"/><path d="M5.5 4.5v2" stroke="#555" stroke-width="0.8"/></svg><div class="t" style="left:688.75px;top:115.24px;font-size:6.8px;color:#333;transform:scaleX(0.827);transform-origin:0 0;">Fills</div><svg style="left:721.5px;top:115.8px;" width="6" height="7" viewBox="0 0 6 7"><rect x="1" y="0.8" width="4" height="5.5" rx="1" fill="none" stroke="#555" stroke-width="0.6"/></svg><div class="t" style="left:728.30px;top:115.24px;font-size:6.8px;color:#333;transform:scaleX(0.990);transform-origin:0 0;">Outlines</div><div class="a" style="left:621px;top:122.5px;width:142.5px;height:206px;background:#fdeab8"></div><div class="a" style="left:622.3px;top:123.5px;width:140px;height:203.8px;background:#ebebeb"></div><div class="a" style="left:625px;top:128.5px;width:89.5px;height:9.5px;background:#fff;border:1px solid #d8d8d8"></div><div class="t" style="left:627.00px;top:130.08px;font-size:6.4px;color:#222;transform:scaleX(0.863);transform-origin:0 0;">Lettering</div><svg style="left:706px;top:131px;" width="6" height="5" viewBox="0 0 6 5"><path d="M0.8 1h4L2.8 3.3z" fill="#222"/></svg><div class="a" style="left:624px;top:142px;width:129px;height:185px;background:#e9e9e9"></div><div class="a" style="left:627px;top:146px;width:123px;height:1px;background:#ffffff;opacity:0"></div><div class="t" style="left:650.00px;top:145.58px;font-size:6.4px;color:#222;transform:scaleX(0.826);transform-origin:0 0;">Word:</div><div class="a" style="left:667px;top:144px;width:18px;height:8.5px;background:#fff;border:1px solid #e2e2e2"></div><div class="t" style="left:669.00px;top:145.58px;font-size:6.4px;color:#222;transform:scaleX(0.843);transform-origin:0 0;">80</div><div class="a" style="left:685px;top:144px;width:8px;height:8.5px;background:#e9e9e9;border:1px solid #dadada"></div><svg style="left:685px;top:144px;" width="8" height="9" viewBox="0 0 8 9"><path d="M2.5 3.3L4 1.3 5.5 3.3z" fill="#e03030"/><path d="M4 2.5v1.2" stroke="#e03030" stroke-width="0.6"/><path d="M2.5 5.4L4 7.4 5.5 5.4z" fill="#20a040"/><path d="M4 4.8v1.2" stroke="#20a040" stroke-width="0.6"/></svg><div class="t" style="left:695.00px;top:145.58px;font-size:6.4px;color:#222;transform:scaleX(0.776);transform-origin:0 0;">%H</div><div class="a" style="left:624px;top:140px;width:129px;height:7.3px;background:#ebebeb"></div><div class="a" style="left:667px;top:156.8px;width:18px;height:8.5px;background:#fff;border:1px solid #e2e2e2"></div><div class="t" style="left:669.00px;top:158.38px;font-size:6.4px;color:#222;transform:scaleX(0.812);transform-origin:0 0;">22.33</div><div class="a" style="left:685px;top:156.8px;width:8px;height:8.5px;background:#e9e9e9;border:1px solid #dadada"></div><svg style="left:685px;top:156.8px;" width="8" height="9" viewBox="0 0 8 9"><path d="M2.5 3.3L4 1.3 5.5 3.3z" fill="#e03030"/><path d="M4 2.5v1.2" stroke="#e03030" stroke-width="0.6"/><path d="M2.5 5.4L4 7.4 5.5 5.4z" fill="#20a040"/><path d="M4 4.8v1.2" stroke="#20a040" stroke-width="0.6"/></svg><div class="t" style="left:696.00px;top:157.58px;font-size:6.4px;color:#222;transform:scaleX(0.797);transform-origin:0 0;">mm</div><div class="t" style="left:653.50px;top:169.88px;font-size:6.4px;color:#222;transform:scaleX(0.793);transform-origin:0 0;">Line:</div><div class="a" style="left:667px;top:169px;width:18px;height:8.5px;background:#fff;border:1px solid #e2e2e2"></div><div class="t" style="left:669.00px;top:170.58px;font-size:6.4px;color:#222;transform:scaleX(0.843);transform-origin:0 0;">50</div><div class="a" style="left:685px;top:169px;width:8px;height:8.5px;background:#e9e9e9;border:1px solid #dadada"></div><svg style="left:685px;top:169px;" width="8" height="9" viewBox="0 0 8 9"><path d="M2.5 3.3L4 1.3 5.5 3.3z" fill="#e03030"/><path d="M4 2.5v1.2" stroke="#e03030" stroke-width="0.6"/><path d="M2.5 5.4L4 7.4 5.5 5.4z" fill="#20a040"/><path d="M4 4.8v1.2" stroke="#20a040" stroke-width="0.6"/></svg><div class="t" style="left:695.00px;top:169.88px;font-size:6.4px;color:#222;transform:scaleX(0.776);transform-origin:0 0;">%H</div><div class="a" style="left:667px;top:181px;width:18px;height:8.5px;background:#fff;border:1px solid #e2e2e2"></div><div class="t" style="left:669.00px;top:182.58px;font-size:6.4px;color:#222;transform:scaleX(0.812);transform-origin:0 0;">18.61</div><div class="a" style="left:685px;top:181px;width:8px;height:8.5px;background:#e9e9e9;border:1px solid #dadada"></div><svg style="left:685px;top:181px;" width="8" height="9" viewBox="0 0 8 9"><path d="M2.5 3.3L4 1.3 5.5 3.3z" fill="#e03030"/><path d="M4 2.5v1.2" stroke="#e03030" stroke-width="0.6"/><path d="M2.5 5.4L4 7.4 5.5 5.4z" fill="#20a040"/><path d="M4 4.8v1.2" stroke="#20a040" stroke-width="0.6"/></svg><div class="t" style="left:696.00px;top:182.08px;font-size:6.4px;color:#222;transform:scaleX(0.797);transform-origin:0 0;">mm</div><div class="a" style="left:628px;top:195.5px;width:6.5px;height:6.5px;background:#fff;border:1px solid #777;border-radius:1px"></div><div class="t" style="left:636.50px;top:196.08px;font-size:6.4px;color:#222;transform:scaleX(0.792);transform-origin:0 0;">Auto letter spacing</div><div class="a" style="left:637px;top:205.5px;width:8px;height:8px;background:#fafafa"></div><div class="t" style="left:639.50px;top:207.14px;font-size:5.5px;color:#777;">&lt;</div><div class="t" style="left:650.00px;top:206.58px;font-size:6.4px;color:#222;transform:scaleX(0.817);transform-origin:0 0;">Letter spacing table...</div><div class="a" style="left:628px;top:219.5px;width:6.5px;height:6.5px;background:#1565d8;border-radius:1px"></div><svg style="left:628px;top:219.5px;" width="7" height="7" viewBox="0 0 7 7"><path d="M1.5 3.6l1.4 1.4 2.6-3" stroke="#fff" stroke-width="0.9" fill="none"/></svg><div class="t" style="left:636.50px;top:220.08px;font-size:6.4px;color:#222;transform:scaleX(0.779);transform-origin:0 0;">Auto kerning</div><div class="a" style="left:637px;top:229.5px;width:8px;height:8px;background:#fafafa"></div><div class="t" style="left:639.50px;top:231.14px;font-size:5.5px;color:#333;">&lt;</div><div class="t" style="left:650.00px;top:230.58px;font-size:6.4px;color:#222;transform:scaleX(0.836);transform-origin:0 0;">Kerning table...</div><div class="a" style="left:626.5px;top:241px;width:121px;height:1px;background:#cfcfcf"></div><div class="a" style="left:628.5px;top:246.5px;width:8.5px;height:8.5px;background:#fafafa"></div><div class="t" style="left:631.00px;top:248.34px;font-size:5.5px;color:#333;">&lt;</div><div class="t" style="left:644.00px;top:248.08px;font-size:6.4px;color:#222;transform:scaleX(0.790);transform-origin:0 0;">Sequence...</div><div class="a" style="left:626.5px;top:259.5px;width:121px;height:1px;background:#cfcfcf"></div><div class="t" style="left:629.00px;top:264.08px;font-size:6.4px;color:#222;transform:scaleX(0.827);transform-origin:0 0;">Lettering Art:</div><div class="a" style="left:673.5px;top:263.5px;width:73px;height:9.5px;background:#fdfdfd;border:1px solid #dcdcdc;border-radius:1.5px"></div><div class="t" style="left:696.00px;top:265.13px;font-size:6.4px;color:#222;transform:scaleX(0.837);transform-origin:0 0;">Remove Art</div><div class="a" style="left:628.5px;top:277px;width:119px;height:31px;background:#e6e6e6;border:1px solid #d6d6d6"></div><div class="a" style="left:631px;top:277.5px;width:27px;height:19px;background:#ededed;border:1px solid #dedede;overflow:hidden"></div><div class="a" style="left:631px;top:277.5px;width:27px;height:19px;overflow:hidden"><svg style="left:0;top:-7px" width="27" height="26" viewBox="0 0 26 26"><path d="M2.0,18.0 L4.1,6.0 L7.8,6.0 L9.9,20.7 L7.2,20.0 L6.8,16.6 L5.2,16.1 L4.7,19.1Z M5.4,13.5 L6.0,9.5 L6.5,13.7Z M9.5,6.0 L15.0,6.0 L16.5,7.8 L16.5,11.9 L16.0,13.4 L16.5,14.8 L16.5,18.9 L15.0,20.9 L9.5,20.6Z M12.4,8.7 L13.7,8.7 L13.7,12.0 L12.4,12.0Z M12.4,15.0 L13.8,15.0 L13.8,18.3 L12.4,18.3Z M18.5,6.0 L23.6,6.0 L24.0,7.2 L24.0,10.3 L21.7,10.7 L21.7,8.8 L19.9,9.0 L19.9,16.6 L21.7,16.1 L21.7,14.3 L24.0,13.7 L24.0,16.8 L23.6,18.2 L18.5,20.1 L17.0,17.9 L17.0,8.6Z" fill="#3e9db2" fill-rule="evenodd"/></svg></div><div class="t" style="left:642.66px;top:299.21px;font-size:6.6px;color:#333;">7</div><div class="a" style="left:658.5px;top:277.5px;width:29px;height:30px;border:1px solid #f5d590"></div><div class="a" style="left:659.5px;top:277.5px;width:27px;height:19px;background:#ededed;border:1px solid #dedede;overflow:hidden"></div><div class="a" style="left:659.5px;top:277.5px;width:27px;height:19px;overflow:hidden"><svg style="left:0;top:-7px" width="27" height="26" viewBox="0 0 26 26"><path d="M2.0,18.0 L4.1,7.9 L7.8,9.2 L9.9,18.0 L7.2,18.0 L6.8,15.8 L5.2,15.7 L4.7,18.0Z M5.4,13.8 L6.0,11.0 L6.5,14.0Z M9.5,9.6 L15.0,9.9 L16.5,10.6 L16.5,13.0 L16.0,13.9 L16.5,14.7 L16.5,17.0 L15.0,18.0 L9.5,18.0Z M12.4,11.4 L13.7,11.4 L13.7,13.2 L12.4,13.2Z M12.4,14.8 L13.8,14.8 L13.8,16.6 L12.4,16.6Z M18.5,9.1 L23.6,7.2 L24.0,8.1 L24.0,11.0 L21.7,11.6 L21.7,10.2 L19.9,10.7 L19.9,15.9 L21.7,15.8 L21.7,14.4 L24.0,14.0 L24.0,16.9 L23.6,18.0 L18.5,18.0 L17.0,16.5 L17.0,11.1Z" fill="#3e9db2" fill-rule="evenodd"/></svg></div><div class="t" style="left:671.16px;top:299.21px;font-size:6.6px;color:#333;">8</div><div class="a" style="left:688.5px;top:277.5px;width:27px;height:19px;background:#ededed;border:1px solid #dedede;overflow:hidden"></div><div class="a" style="left:688.5px;top:277.5px;width:27px;height:19px;overflow:hidden"><svg style="left:0;top:-7px" width="27" height="26" viewBox="0 0 26 26"><path d="M2.5,17.0 L4.5,6.9 L8.0,3.9 L10.1,23.3 L7.5,21.8 L7.0,17.4 L5.5,16.7 L5.1,19.6Z M5.8,13.9 L6.3,9.3 L6.8,14.0Z M9.6,2.9 L14.9,2.3 L16.4,5.3 L16.4,11.0 L15.8,13.0 L16.4,15.0 L16.4,20.7 L14.9,23.7 L9.6,23.1Z M12.5,6.0 L13.7,6.0 L13.7,10.8 L12.5,10.8Z M12.5,15.2 L13.8,15.2 L13.8,20.0 L12.5,20.0Z M18.3,4.1 L23.2,8.6 L23.5,9.8 L23.5,11.9 L21.3,11.3 L21.3,9.5 L19.6,8.6 L19.6,17.4 L21.3,16.5 L21.3,14.7 L23.5,14.1 L23.5,16.2 L23.2,17.4 L18.3,21.9 L16.8,19.3 L16.8,6.7Z" fill="#3e9db2" fill-rule="evenodd"/></svg></div><div class="t" style="left:700.16px;top:299.21px;font-size:6.6px;color:#333;">9</div><svg style="left:739px;top:279px;" width="7" height="28" viewBox="0 0 7 28"><path d="M1.5 4.5l2-2 2 2z" fill="#111"/><path d="M1.5 11.5h4l-2 2z" fill="#111"/><path d="M1.5 20h4M1.5 21l2 2.5 2-2.5z" fill="#111" stroke="#111" stroke-width="0.6"/></svg><div class="a" style="left:753px;top:142px;width:8px;height:185px;background:#ededed"></div><div class="a" style="left:757px;top:259.5px;width:2.3px;height:59px;background:#868686;border-radius:1px"></div><div class="a" style="left:626px;top:332.5px;width:33px;height:9.5px;background:#fdfdfd;border:1px solid #dcdcdc;border-radius:1.5px"></div><div class="t" style="left:634.50px;top:334.13px;font-size:6.4px;color:#222;transform:scaleX(0.823);transform-origin:0 0;">Effects</div><div class="a" style="left:688px;top:332.5px;width:14.5px;height:9.5px;background:#fdfdfd;border:1px solid #dcdcdc;border-radius:1.5px"></div><div class="t" style="left:689.75px;top:334.13px;font-size:6.4px;color:#222;transform:scaleX(0.754);transform-origin:0 0;">Save</div><div class="a" style="left:706.5px;top:332.5px;width:9px;height:9.5px;background:#fdfdfd;border:1px solid #dcdcdc;border-radius:1.5px"></div><div class="t" style="left:709.22px;top:334.13px;font-size:6.4px;color:#222;">?</div><div class="a" style="left:0px;top:346.5px;width:768px;height:41px;background:#ebebeb"></div><div class="a" style="left:322px;top:340.5px;width:14px;height:2.2px;background:#8a8a8a;border-radius:1px"></div><div class="a" style="left:19.5px;top:349px;width:3px;height:15px;background-image:radial-gradient(#bbb 0.6px,transparent 0.7px);background-size:2px 2px"></div><div class="a" style="left:25px;top:350.8px;width:57.5px;height:11px;background:#fff;border:1px solid #dedede"></div><div class="t" style="left:27.00px;top:353.74px;font-size:6.8px;color:#222;transform:scaleX(0.853);transform-origin:0 0;">Colorway 1</div><svg style="left:76px;top:354px;" width="6" height="5" viewBox="0 0 6 5"><path d="M0.5 1h4.5L2.75 3.5z" fill="#555"/></svg><svg style="left:84px;top:350px;" width="7" height="13" viewBox="0 0 7 13"><rect x="0.5" y="0.5" width="6" height="12" fill="#222"/><path d="M1 2h5" stroke="#5a70c8" stroke-width="1.1"/><path d="M1 4h5" stroke="#f09a30" stroke-width="1.1"/><path d="M1 6h5" stroke="#50b040" stroke-width="1.1"/><path d="M1 8h5" stroke="#e04050" stroke-width="1.1"/><path d="M1 10h5" stroke="#3070d0" stroke-width="1.1"/></svg><svg style="left:92.5px;top:350px;" width="6" height="13" viewBox="0 0 6 13"><rect x="0.5" y="0.5" width="5" height="12" fill="#d4d4dc"/><path d="M1 2.5h4M1 4.5h4M1 6.5h4M1 8.5h4M1 10.5h4" stroke="#f4f4f8" stroke-width="0.6"/></svg><div class="a" style="left:100.5px;top:349px;width:1px;height:15px;background:#cfcfcf"></div><svg style="left:103px;top:349.5px;" width="14" height="14" viewBox="0 0 14 14"><rect x="0.5" y="0.5" width="4.3" height="4.3" fill="#50c040"/><rect x="4.8" y="0.5" width="4.3" height="4.3" fill="#c8e8b0"/><rect x="9.1" y="0.5" width="4.3" height="4.3" fill="#5a78d0"/><rect x="0.5" y="4.8" width="4.3" height="4.3" fill="#a0a0e0"/><rect x="4.8" y="4.8" width="4.3" height="4.3" fill="#ffffff"/><rect x="9.1" y="4.8" width="4.3" height="4.3" fill="#5090e0"/><rect x="0.5" y="9.1" width="4.3" height="4.3" fill="#000000"/><rect x="4.8" y="9.1" width="4.3" height="4.3" fill="#f08a30"/><rect x="9.1" y="9.1" width="4.3" height="4.3" fill="#e04050"/><rect x="0.5" y="0.5" width="12.9" height="12.9" fill="none" stroke="#444" stroke-width="0.5"/></svg><div class="a" style="left:119px;top:357px;width:1.3px;height:1.3px;background:#555"></div><svg style="left:126px;top:349px;" width="15" height="15" viewBox="0 0 15 15"><path d="M4.5 1.5L1 4l2 3 1.5-1V14h7V6l1.5 1 2-3-3.5-2.5q-1.5 1.5-3 1.5t-3-1.5z" fill="#1a9a50" stroke="#0a6a30" stroke-width="0.5"/><path d="M3 2.5q4.5 4 9 0L11 1.5Q7.5 4 4 1.5z" fill="#30a8e0"/></svg><div class="a" style="left:141.5px;top:357px;width:1.3px;height:1.3px;background:#555"></div><div class="a" style="left:145px;top:349px;width:1px;height:15px;background:#cfcfcf"></div><div class="a" style="left:147px;top:348.3px;width:17.5px;height:16px;background:#00ff00;border:1px solid #22cc22"></div><div class="t" style="left:153.50px;top:354.08px;font-size:6.4px;color:#222;">7</div><div class="a" style="left:166px;top:349px;width:1px;height:15px;background:#cfcfcf"></div><svg style="left:167px;top:349px;" width="14" height="15" viewBox="0 0 14 15"><path d="M2 13l8-8" stroke="#2a7a98" stroke-width="2"/><path d="M9 3l3-2 2 2-2 3z" fill="#1a3a50"/><path d="M1 14l1.5-1" stroke="#333" stroke-width="1"/></svg><svg style="left:182px;top:349px;" width="15" height="15" viewBox="0 0 15 15"><path d="M3 8l5-5 5 5-5 5z" fill="#f4c878" stroke="#806030" stroke-width="0.6"/><path d="M9 1v6" stroke="#333" stroke-width="1"/><path d="M2 8q-1 4 1 5" stroke="#30a0e0" stroke-width="1.3" fill="none"/></svg><div class="a" style="left:198.5px;top:349px;width:1px;height:15px;background:#cfcfcf"></div><svg style="left:200px;top:349px;" width="14" height="15" viewBox="0 0 14 15"><path d="M7 2.5v10M2 7.5h10" stroke="#222" stroke-width="2.6"/></svg><svg style="left:215px;top:349px;" width="15" height="15" viewBox="0 0 15 15"><path d="M1.5 7.5h12" stroke="#222" stroke-width="2.6"/></svg><div class="a" style="left:233px;top:349px;width:1px;height:15px;background:#cfcfcf"></div><div class="a" style="left:235.2px;top:349.5px;width:14.2px;height:13px;background:#ffc600"></div><div class="t" style="left:240.63px;top:353.72px;font-size:6px;color:#333;">1</div><div class="a" style="left:252.1px;top:349.5px;width:14.2px;height:13px;background:#3ca040"></div><div class="t" style="left:257.53px;top:353.72px;font-size:6px;color:#ddd;">2</div><div class="a" style="left:268.0px;top:348.5px;width:16px;height:15.5px;background:#000"></div><div class="a" style="left:270.0px;top:350.5px;width:12px;height:11.5px;background:#333;border:1px solid #fff"></div><div class="a" style="left:278.5px;top:349px;width:4.5px;height:4px;background:#1a40ff"></div><div class="t" style="left:274.43px;top:353.72px;font-size:6px;color:#ddd;">3</div><div class="a" style="left:285.9px;top:349.5px;width:14.2px;height:13px;background:#ffff00"></div><div class="t" style="left:291.33px;top:353.72px;font-size:6px;color:#333;">4</div><div class="a" style="left:302.79999999999995px;top:349.5px;width:14.2px;height:13px;background:#3cc8c8"></div><div class="t" style="left:308.23px;top:353.72px;font-size:6px;color:#ddd;">5</div><div class="a" style="left:319.7px;top:349.5px;width:14.2px;height:13px;background:#c000c0"></div><div class="t" style="left:325.13px;top:353.72px;font-size:6px;color:#ddd;">6</div><div class="a" style="left:336.59999999999997px;top:349.5px;width:14.2px;height:13px;background:#00ff00"></div><div class="t" style="left:342.03px;top:353.72px;font-size:6px;color:#333;">7</div><div class="a" style="left:353.5px;top:349.5px;width:14.2px;height:13px;background:#000000"></div><div class="a" style="left:363.0px;top:349px;width:4.5px;height:4px;background:#1a40ff"></div><div class="t" style="left:358.93px;top:353.72px;font-size:6px;color:#ddd;">8</div><div class="a" style="left:370.4px;top:349.5px;width:14.2px;height:13px;background:#ffffff"></div><div class="t" style="left:375.83px;top:353.72px;font-size:6px;color:#333;">9</div><div class="a" style="left:387.29999999999995px;top:349.5px;width:14.2px;height:13px;background:#000080"></div><div class="t" style="left:391.06px;top:353.72px;font-size:6px;color:#ddd;">10</div><div class="a" style="left:404.2px;top:349.5px;width:14.2px;height:13px;background:#8c0000"></div><div class="t" style="left:408.19px;top:353.72px;font-size:6px;color:#ddd;">11</div><div class="a" style="left:421.09999999999997px;top:349.5px;width:14.2px;height:13px;background:#ff9933"></div><div class="t" style="left:424.86px;top:353.72px;font-size:6px;color:#ddd;">12</div><div class="a" style="left:438.0px;top:349.5px;width:14.2px;height:13px;background:#9900cc"></div><div class="t" style="left:441.76px;top:353.72px;font-size:6px;color:#ddd;">13</div><div class="a" style="left:454.9px;top:349.5px;width:14.2px;height:13px;background:#996633"></div><div class="t" style="left:458.66px;top:353.72px;font-size:6px;color:#ddd;">14</div><div class="a" style="left:471.79999999999995px;top:349.5px;width:14.2px;height:13px;background:#ff88cc"></div><div class="t" style="left:475.56px;top:353.72px;font-size:6px;color:#ddd;">15</div><svg style="left:488px;top:349px;" width="7" height="15" viewBox="0 0 7 15"><path d="M1.5 5l2-2 2 2M1.5 10l2 2 2-2" stroke="#999" stroke-width="0.8" fill="none"/></svg><div class="a" style="left:496px;top:349px;width:1px;height:15px;background:#cfcfcf"></div><svg style="left:499px;top:350px;" width="17" height="13" viewBox="0 0 17 13"><rect x="1" y="2" width="15" height="1.5" fill="#5a6ab0"/><g><rect x="1.5" y="3.5" width="1.7" height="8.5" fill="#3070d0"/><rect x="3.6" y="3.5" width="1.7" height="8.5" fill="#e04050"/><rect x="5.7" y="3.5" width="1.7" height="8.5" fill="#f09a30"/><rect x="7.8" y="3.5" width="1.7" height="8.5" fill="#50b040"/><rect x="9.9" y="3.5" width="1.7" height="8.5" fill="#a04080"/><rect x="12.0" y="3.5" width="1.7" height="8.5" fill="#2ab0a0"/><rect x="14.1" y="3.5" width="1.7" height="8.5" fill="#e0c040"/></g><rect x="1" y="12" width="15" height="1" fill="#5a6ab0"/></svg><svg style="left:517px;top:350px;" width="17" height="13" viewBox="0 0 17 13"><rect x="1" y="2" width="15" height="1.5" fill="#5a6ab0"/><g><rect x="1.5" y="3.5" width="1.7" height="8.5" fill="#2ab0a0"/><rect x="3.6" y="3.5" width="1.7" height="8.5" fill="#e04050"/><rect x="5.7" y="3.5" width="1.7" height="8.5" fill="#f09a30"/><rect x="7.8" y="3.5" width="1.7" height="8.5" fill="#e0c040"/><rect x="9.9" y="3.5" width="1.7" height="8.5" fill="#3070d0"/><rect x="12.0" y="3.5" width="1.7" height="8.5" fill="#a04080"/><rect x="14.1" y="3.5" width="1.7" height="8.5" fill="#50b040"/></g><path d="M4 4.5l9 7M13 4.5l-9 7" stroke="#222" stroke-width="1"/><rect x="1" y="12" width="15" height="1" fill="#5a6ab0"/></svg><div class="a" style="left:535px;top:349px;width:1px;height:15px;background:#cfcfcf"></div><svg style="left:537px;top:349.5px;" width="14" height="14" viewBox="0 0 14 14"><rect x="1" y="1" width="12" height="12" fill="#eef" stroke="#445" stroke-width="0.8"/><path d="M1 1l12 12" stroke="#223" stroke-width="1.1"/></svg><div class="a" style="left:552px;top:349px;width:1px;height:15px;background:#cfcfcf"></div><svg style="left:554px;top:349.5px;" width="15" height="14" viewBox="0 0 15 14"><circle cx="7.3" cy="7" r="5.5" fill="none" stroke="#40b080" stroke-width="2.6"/><path d="M7.3 1.5a5.5 5.5 0 0 1 5.5 5.5" fill="none" stroke="#e04050" stroke-width="2.6"/><path d="M3 11a5.5 5.5 0 0 1-1-6" fill="none" stroke="#e04050" stroke-width="2.6"/></svg><svg style="left:569.5px;top:349.5px;" width="15" height="14" viewBox="0 0 15 14"><circle cx="7.3" cy="7" r="6.3" fill="#40b0c0"/><path d="M7.3 7V0.7a6.3 6.3 0 0 1 5.5 9.4z" fill="#e04050"/><path d="M7.3 7V0.7A6.3 6.3 0 0 0 1.8 10.1z" fill="#60c040"/></svg><div class="a" style="left:585px;top:349px;width:1px;height:15px;background:#cfcfcf"></div><svg style="left:587px;top:349px;" width="15" height="15" viewBox="0 0 15 15"><rect x="1" y="0.8" width="12" height="2" fill="#c8903c"/><rect x="1" y="12.2" width="12" height="2" fill="#c8903c"/><rect x="2.5" y="2.8" width="9" height="9.4" fill="#14a8f0" stroke="#0a60a0" stroke-width="0.6"/></svg><div class="a" style="left:0px;top:365.5px;width:300px;height:1px;background:#e4e4e4"></div><div class="a" style="left:1.5px;top:368px;width:3px;height:16px;background-image:radial-gradient(#bbb 0.6px,transparent 0.7px);background-size:2px 2px"></div><svg style="left:6px;top:368px;" width="14" height="16" viewBox="0 0 14 16"><path d="M2 4l2-2 8 8-1 3-3-1z" fill="#fff" stroke="#555" stroke-width="0.8"/><path d="M9 12l3 2" stroke="#555" stroke-width="0.8"/></svg><svg style="left:21px;top:368px;" width="14" height="16" viewBox="0 0 14 16"><path d="M2 4l2-2 8 8-1 3-3-1z" fill="#fff" stroke="#555" stroke-width="0.8"/><path d="M10 2l1 2M12 3l-2 1" stroke="#999" stroke-width="0.6"/></svg><div class="a" style="left:35px;top:367px;width:16px;height:17.5px;background:#fde9b8"></div><svg style="left:35.5px;top:368px;" width="15" height="16" viewBox="0 0 15 16"><rect x="1.5" y="1.5" width="8" height="8" fill="#f8e040" stroke="#807020" stroke-width="0.5" stroke-dasharray="1 0.6"/><circle cx="10" cy="10.5" r="4" fill="#40b050"/><circle cx="9" cy="10" r="1.8" fill="#60a0e0"/></svg><svg style="left:52.5px;top:368px;" width="15" height="16" viewBox="0 0 15 16"><rect x="2" y="1" width="11" height="6" rx="1" fill="#e02020" stroke="#333" stroke-width="0.5"/><path d="M7.5 7v3M3 10h9" stroke="#333" stroke-width="0.7"/><rect x="1" y="10" width="4" height="4" fill="#30a030"/><rect x="5.5" y="10" width="4" height="4" fill="#e02020"/><rect x="10" y="10" width="4" height="4" fill="#f0d020"/></svg><div class="a" style="left:69px;top:368px;width:1px;height:16px;background:#cfcfcf"></div><svg style="left:71px;top:368px;" width="15" height="16" viewBox="0 0 15 16"><path d="M2 1v9h9M4 3h7v9" stroke="#666" stroke-width="0.9" fill="none"/><path d="M3 9l6-6" stroke="#666" stroke-width="0.6"/><path d="M8 14q3-6 6 0" fill="#bbb"/></svg><div class="a" style="left:87px;top:376px;width:1.3px;height:1.3px;background:#999"></div><svg style="left:90px;top:368px;" width="15" height="16" viewBox="0 0 15 16"><path d="M2 1v9h9M4 3h7v9" stroke="#666" stroke-width="0.9" fill="none"/><path d="M3 9l6-6" stroke="#666" stroke-width="0.6"/><path d="M9 10l5 5M14 10l-5 5" stroke="#888" stroke-width="1"/></svg><svg style="left:107px;top:368px;" width="15" height="16" viewBox="0 0 15 16"><path d="M2 1v9h9M4 3h7v9" stroke="#666" stroke-width="0.9" fill="none"/><path d="M3 9l6-6" stroke="#666" stroke-width="0.6"/><path d="M9 13l2 2 3-4" stroke="#aaa" stroke-width="1" fill="none"/></svg><svg style="left:122px;top:368px;" width="15" height="16" viewBox="0 0 15 16"><rect x="1" y="1.5" width="4" height="13" fill="#888"/><rect x="9" y="1.5" width="4" height="13" fill="#888"/><rect x="1.8" y="6" width="2.4" height="4" fill="#fff"/><rect x="9.8" y="6" width="2.4" height="4" fill="#fff"/><path d="M5 8h4" stroke="#222" stroke-width="1"/><path d="M7.5 6.5l1.5 1.5-1.5 1.5z" fill="#222"/></svg><div class="a" style="left:139px;top:368px;width:1px;height:16px;background:#cfcfcf"></div><svg style="left:141px;top:368px;" width="13" height="16" viewBox="0 0 13 16"><path d="M9 2Q10 5 5 8t1 6" stroke="#bbb" stroke-width="1" fill="none"/><path d="M7 4l3-1M5 7l3-1" stroke="#ccc" stroke-width="0.6"/></svg><svg style="left:155px;top:368px;" width="14" height="16" viewBox="0 0 14 16"><path d="M1 3l1.5 2 1.5-2 1.5 2 1.5-2 1.5 2 1.5-2" stroke="#aaa" stroke-width="0.7" fill="none"/><ellipse cx="8" cy="10.5" rx="4.5" ry="3.5" fill="#b0b0b0"/></svg><svg style="left:170px;top:368px;" width="14" height="16" viewBox="0 0 14 16"><path d="M1 3l1.5 2 1.5-2 1.5 2 1.5-2 1.5 2 1.5-2" stroke="#aaa" stroke-width="0.7" fill="none"/><ellipse cx="7.5" cy="10.5" rx="4.5" ry="3.5" fill="#b0b0b0"/></svg><svg style="left:186px;top:368px;" width="12" height="16" viewBox="0 0 12 16"><path d="M9 2q1 5-3 8t-3 4" stroke="#bbb" stroke-width="1" fill="none"/></svg><svg style="left:199px;top:368px;" width="15" height="16" viewBox="0 0 15 16"><circle cx="7" cy="9.5" r="5" fill="none" stroke="#bbb" stroke-width="0.9"/><path d="M7 4.5q0-3 3-3" stroke="#bbb" stroke-width="0.8" fill="none"/></svg><div class="a" style="left:216.5px;top:368px;width:1px;height:16px;background:#cfcfcf"></div><svg style="left:219px;top:368px;" width="15" height="16" viewBox="0 0 15 16"><circle cx="7" cy="3.5" r="2" fill="#ddd" stroke="#777" stroke-width="0.6"/><path d="M4 6h6v4H4z" fill="#ccc" stroke="#777" stroke-width="0.6"/><path d="M3 10h8v4H3z" fill="#eee" stroke="#777" stroke-width="0.6"/><path d="M10 9l4 5" stroke="#222" stroke-width="1"/></svg><div class="a" style="left:235.5px;top:368px;width:1px;height:16px;background:#cfcfcf"></div><svg style="left:237px;top:368px;" width="15" height="16" viewBox="0 0 15 16"><path d="M1 3.5h13M1 8h13M1 12.5h13" stroke="#444" stroke-width="0.9"/><rect x="3" y="2" width="3" height="3" fill="#444"/><rect x="8" y="6.5" width="3" height="3" fill="#444"/><rect x="4" y="11" width="3" height="3" fill="#444"/></svg><svg style="left:253px;top:368px;" width="15" height="16" viewBox="0 0 15 16"><rect x="1" y="5" width="13" height="9" rx="1" fill="#fff" stroke="#333" stroke-width="0.9"/><circle cx="7.5" cy="9.5" r="3" fill="#333"/><rect x="4" y="3" width="4" height="2" fill="#333"/></svg><svg style="left:268px;top:368px;" width="15" height="16" viewBox="0 0 15 16"><rect x="1" y="2" width="13" height="12" fill="#fff" stroke="#555" stroke-width="0.8"/><path d="M2 13l3-8 3 6 2-7 3 9" stroke="#555" stroke-width="0.7" fill="none"/></svg><svg style="left:284px;top:368px;" width="15" height="16" viewBox="0 0 15 16"><path d="M2 12q4-8 11-10M3 14q5-6 10-8M5 9q2 2 6-4" stroke="#999" stroke-width="1" stroke-dasharray="1 0.7" fill="none"/></svg><div class="a" style="left:300px;top:366px;width:1px;height:20px;background:#dcdcdc"></div><div class="a" style="left:503px;top:366px;width:177px;height:20px;background:#ececec;border-left:1px solid #dcdcdc;border-right:1px solid #dcdcdc"></div><div class="t" style="left:509.00px;top:369.55px;font-size:6.2px;color:#333;transform:scaleX(0.860);transform-origin:0 0;">Position X:</div><div class="t" style="left:509.00px;top:377.95px;font-size:6.2px;color:#333;transform:scaleX(0.874);transform-origin:0 0;">Position Y:</div><div class="a" style="left:538px;top:368px;width:23px;height:8px;background:#fff"></div><div class="t" style="left:540.00px;top:369.35px;font-size:6.2px;color:#222;transform:scaleX(0.829);transform-origin:0 0;">0.62</div><div class="a" style="left:538px;top:376.8px;width:23px;height:8px;background:#fff"></div><div class="t" style="left:540.00px;top:378.15px;font-size:6.2px;color:#222;transform:scaleX(0.832);transform-origin:0 0;">-179.44</div><div class="a" style="left:596px;top:368px;width:23px;height:8px;background:#fff"></div><div class="t" style="left:598.00px;top:369.35px;font-size:6.2px;color:#222;transform:scaleX(0.844);transform-origin:0 0;">185.63</div><div class="a" style="left:596px;top:376.8px;width:23px;height:8px;background:#fff"></div><div class="t" style="left:598.00px;top:378.15px;font-size:6.2px;color:#222;transform:scaleX(0.806);transform-origin:0 0;">49.88</div><div class="a" style="left:634px;top:368px;width:23px;height:8px;background:#fff"></div><div class="t" style="left:636.00px;top:369.35px;font-size:6.2px;color:#222;transform:scaleX(0.844);transform-origin:0 0;">100.00</div><div class="a" style="left:634px;top:376.8px;width:23px;height:8px;background:#fff"></div><div class="t" style="left:636.00px;top:378.15px;font-size:6.2px;color:#222;transform:scaleX(0.844);transform-origin:0 0;">100.00</div><div class="t" style="left:563.00px;top:369.55px;font-size:6.2px;color:#333;transform:scaleX(0.823);transform-origin:0 0;">mm</div><div class="t" style="left:563.00px;top:377.95px;font-size:6.2px;color:#333;transform:scaleX(0.823);transform-origin:0 0;">mm</div><div class="t" style="left:621.00px;top:369.55px;font-size:6.2px;color:#333;transform:scaleX(0.823);transform-origin:0 0;">mm</div><div class="t" style="left:621.00px;top:377.95px;font-size:6.2px;color:#333;transform:scaleX(0.823);transform-origin:0 0;">mm</div><div class="t" style="left:660.00px;top:369.55px;font-size:6.2px;color:#333;transform:scaleX(0.726);transform-origin:0 0;">%</div><div class="t" style="left:660.00px;top:377.95px;font-size:6.2px;color:#333;transform:scaleX(0.726);transform-origin:0 0;">%</div><div class="t" style="left:578.00px;top:369.55px;font-size:6.2px;color:#333;transform:scaleX(0.854);transform-origin:0 0;">Width:</div><div class="t" style="left:578.00px;top:377.95px;font-size:6.2px;color:#333;transform:scaleX(0.814);transform-origin:0 0;">Height:</div><div class="a" style="left:574.5px;top:367px;width:1px;height:18px;background:#dcdcdc"></div><svg style="left:666px;top:367px;" width="13" height="18" viewBox="0 0 13 18"><path d="M1 2.5h6M1 16.5h6M3.5 2.5v14" stroke="#444" stroke-width="0.6" fill="none"/><path d="M6.5 7.5h4v5h-6v-5z" fill="none" stroke="#444" stroke-width="0.8"/><path d="M7 7.5V6a1.7 1.7 0 0 1 3.4 0v1.5" fill="none" stroke="#444" stroke-width="0.8"/><rect x="8" y="9.3" width="1.2" height="1.5" fill="#444"/></svg><div class="a" style="left:0px;top:387.2px;width:768px;height:19.8px;background:#d0d0d0"></div><div class="t" style="left:2.00px;top:390.75px;font-size:6.2px;color:#333;transform:scaleX(0.838);transform-origin:0 0;">11,366</div><div class="t" style="left:165.00px;top:390.75px;font-size:6.2px;color:#333;transform:scaleX(1.042);transform-origin:0 0;">SATIN Auto 90%</div><div class="t" style="left:297.00px;top:390.75px;font-size:6.2px;color:#333;transform:scaleX(0.977);transform-origin:0 0;">Object 1: Lettering</div><div class="t" style="left:541.50px;top:400.05px;font-size:6.2px;color:#333;transform:scaleX(0.996);transform-origin:0 0;">(used)</div></body></html>
